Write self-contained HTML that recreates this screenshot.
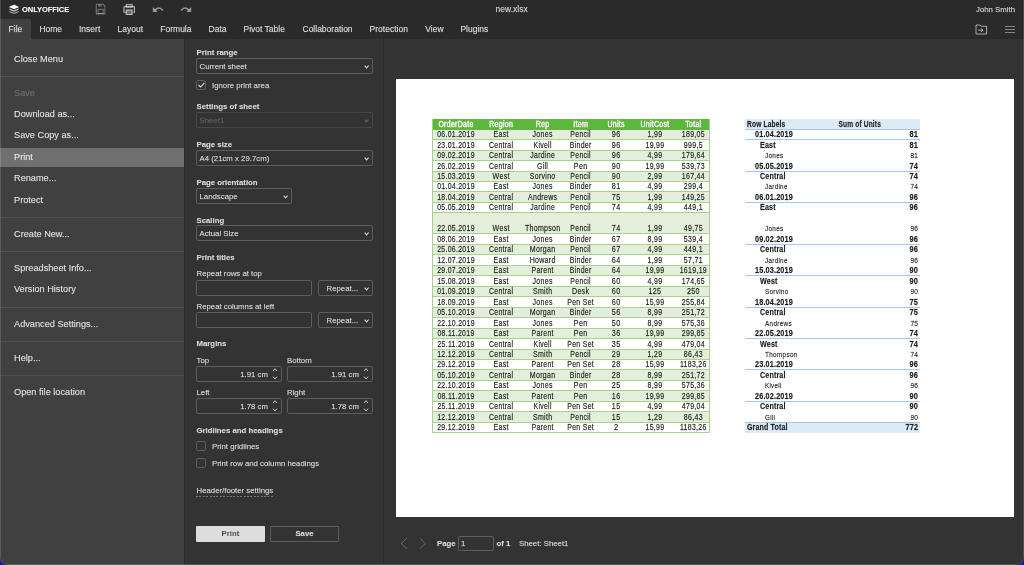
<!DOCTYPE html><html><head><meta charset="utf-8"><style>
*{margin:0;padding:0;box-sizing:border-box}
html,body{width:1024px;height:565px;overflow:hidden;background:#2c10a8}
body{font-family:"Liberation Sans",sans-serif;position:relative}
.abs{position:absolute}
.t{position:absolute;white-space:nowrap;line-height:1;-webkit-text-stroke:0.25px rgba(255,255,255,.3)}
#win{position:absolute;left:0;top:0;width:1024px;height:565px;background:#333;border-radius:0 0 7px 7px;overflow:hidden;filter:blur(0.3px)}
#frame{position:absolute;left:0;top:-10px;width:1024px;height:575px;border:1px solid rgba(255,255,255,.15);border-radius:0 0 7px 7px;pointer-events:none}
#hdr{position:absolute;left:0;top:0;width:1024px;height:39px;background:#2a2a2a}
#left{position:absolute;left:0;top:39px;width:184px;height:526px;background:#404040}
#mid{position:absolute;left:185px;top:39px;width:198px;height:526px;background:#333}
#prev{position:absolute;left:384px;top:39px;width:640px;height:526px;background:#333}
.div1{position:absolute;background:#2b2b2b}
.tab{position:absolute;top:19px;height:20px;font-size:8.5px;color:rgba(255,255,255,.8)}
.mi{position:absolute;left:14px;font-size:9.2px;color:rgba(255,255,255,.8)}
.sep{position:absolute;left:0;width:184px;height:1px;background:#4e4e4e}
.lbl{position:absolute;font-size:7.8px;font-weight:bold;color:rgba(255,255,255,.8)}
.txt{position:absolute;font-size:7.8px;color:rgba(255,255,255,.8)}
.box{position:absolute;border:1px solid #5d5d5d;border-radius:2px;height:16px}
.caret{position:absolute;width:4px;height:4px;border-right:1px solid rgba(255,255,255,.8);border-bottom:1px solid rgba(255,255,255,.8);transform:rotate(45deg)}
.cb{position:absolute;width:10px;height:10px;border:1px solid #5d5d5d;border-radius:2px}
#page{position:absolute;left:396px;top:79px;width:618px;height:438px;background:#fff}
.c{position:absolute;white-space:nowrap;line-height:1;font-size:7.6px;color:#222}
.k{-webkit-text-stroke:0.3px rgba(0,0,0,.45)}
</style></head><body><div id="win">
<div id="hdr"></div>
<div id="left"></div><div class="div1" style="left:184px;top:39px;width:1px;height:526px"></div>
<div id="mid"></div><div class="div1" style="left:383px;top:39px;width:1px;height:526px"></div>
<div id="prev"></div>
<svg class="abs" style="left:8px;top:4px" width="12" height="11" viewBox="0 0 12 11">
<path d="M6 0.5 L11.2 2.9 L6 5.3 L0.8 2.9Z" fill="#fff"/>
<path d="M1.4 5 L6 7.1 L10.6 5" fill="none" stroke="rgba(255,255,255,.75)" stroke-width="1.1"/>
<path d="M1.4 7.4 L6 9.5 L10.6 7.4" fill="none" stroke="rgba(255,255,255,.6)" stroke-width="1.1"/>
</svg>
<div class="t" style="left:22px;top:6px;font-size:7.5px;font-weight:bold;color:#fff;letter-spacing:-0.05px">ONLYOFFICE</div>
<svg class="abs" style="left:95px;top:3px" width="11" height="12" viewBox="0 0 11 12">
<path d="M1.3 1.3 H8 L9.9 3.2 V10.9 H1.3Z" fill="none" stroke="rgba(255,255,255,.33)" stroke-width="1.1"/>
<rect x="3" y="1.5" width="3.6" height="2" fill="rgba(255,255,255,.33)"/>
<rect x="3" y="6.3" width="5.2" height="4.2" fill="none" stroke="rgba(255,255,255,.33)" stroke-width="1"/>
</svg>
<svg class="abs" style="left:123px;top:3px" width="13" height="12" viewBox="0 0 13 12">
<rect x="3.3" y="1.6" width="5.8" height="2.4" fill="none" stroke="rgba(255,255,255,.65)" stroke-width="1.1"/>
<path d="M3 9.3 H0.95 V4.4 Q0.95 3.6 1.8 3.6 H10.6 Q11.45 3.6 11.45 4.4 V9.3 H10.2" fill="none" stroke="rgba(255,255,255,.65)" stroke-width="1.1"/>
<rect x="3.3" y="7" width="5.8" height="4.4" fill="rgba(255,255,255,.3)" stroke="rgba(255,255,255,.65)" stroke-width="1.1"/>
</svg>
<svg class="abs" style="left:152px;top:6px" width="12" height="7" viewBox="0 0 12 7">
<path d="M3 4.2 Q7 -0.2 11 4.4" fill="none" stroke="rgba(255,255,255,.5)" stroke-width="1.5"/>
<path d="M0.8 0.9 V6 H5.8Z" fill="rgba(255,255,255,.5)"/>
</svg>
<svg class="abs" style="left:180px;top:6px" width="12" height="7" viewBox="0 0 12 7">
<path d="M9 4.2 Q5 -0.2 1 4.4" fill="none" stroke="rgba(255,255,255,.5)" stroke-width="1.5"/>
<path d="M11.2 0.9 V6 H6.2Z" fill="rgba(255,255,255,.5)"/>
</svg>
<div class="t" style="left:495.6px;top:5px;font-size:8.5px;color:rgba(255,255,255,.8)">new.xlsx</div>
<div class="t" style="left:976px;top:6px;font-size:7.8px;color:rgba(255,255,255,.8)">John Smith</div>
<svg class="abs" style="left:975px;top:24px" width="13" height="11" viewBox="0 0 13 11">
<path d="M1 1 H5 L6.2 2.2 H11.6 V10 H1Z" fill="none" stroke="rgba(255,255,255,.65)" stroke-width="0.9"/>
<path d="M3.2 6.2 H7.8" stroke="rgba(255,255,255,.7)" stroke-width="0.9"/>
<path d="M6.2 4.6 L7.9 6.2 L6.2 7.8" fill="none" stroke="rgba(255,255,255,.7)" stroke-width="0.9"/>
</svg>
<svg class="abs" style="left:1005px;top:25px" width="10" height="9" viewBox="0 0 10 9">
<path d="M0 1.5H10M0 4.5H10M0 7.5H10" stroke="rgba(255,255,255,.55)" stroke-width="0.8"/>
</svg>
<div class="abs" style="left:0;top:19px;width:31px;height:20px;background:#404040"></div>
<div class="t" style="left:8.6px;top:25px;font-size:8.5px;color:rgba(255,255,255,.85)">File</div>
<div class="t" style="left:39.4px;top:25px;font-size:8.5px;color:rgba(255,255,255,.85)">Home</div>
<div class="t" style="left:79px;top:25px;font-size:8.5px;color:rgba(255,255,255,.85)">Insert</div>
<div class="t" style="left:117.6px;top:25px;font-size:8.5px;color:rgba(255,255,255,.85)">Layout</div>
<div class="t" style="left:160.3px;top:25px;font-size:8.5px;color:rgba(255,255,255,.85)">Formula</div>
<div class="t" style="left:208.6px;top:25px;font-size:8.5px;color:rgba(255,255,255,.85)">Data</div>
<div class="t" style="left:243.5px;top:25px;font-size:8.5px;color:rgba(255,255,255,.85)">Pivot Table</div>
<div class="t" style="left:302.5px;top:25px;font-size:8.5px;color:rgba(255,255,255,.85)">Collaboration</div>
<div class="t" style="left:369.6px;top:25px;font-size:8.5px;color:rgba(255,255,255,.85)">Protection</div>
<div class="t" style="left:425.3px;top:25px;font-size:8.5px;color:rgba(255,255,255,.85)">View</div>
<div class="t" style="left:460.4px;top:25px;font-size:8.5px;color:rgba(255,255,255,.85)">Plugins</div>
<div class="abs" style="left:0;top:148px;width:184px;height:19px;background:#707070"></div>
<div class="t" style="left:14px;top:55px;font-size:9.2px;color:rgba(255,255,255,.85)">Close Menu</div>
<div class="t" style="left:14px;top:89px;font-size:9.2px;color:rgba(255,255,255,.2);-webkit-text-stroke:0.25px rgba(255,255,255,.1)">Save</div>
<div class="t" style="left:14px;top:110px;font-size:9.2px;color:rgba(255,255,255,.85)">Download as...</div>
<div class="t" style="left:14px;top:131px;font-size:9.2px;color:rgba(255,255,255,.85)">Save Copy as...</div>
<div class="t" style="left:14px;top:153px;font-size:9.2px;color:rgba(255,255,255,.85)">Print</div>
<div class="t" style="left:14px;top:174px;font-size:9.2px;color:rgba(255,255,255,.85)">Rename...</div>
<div class="t" style="left:14px;top:196px;font-size:9.2px;color:rgba(255,255,255,.85)">Protect</div>
<div class="t" style="left:14px;top:230px;font-size:9.2px;color:rgba(255,255,255,.85)">Create New...</div>
<div class="t" style="left:14px;top:264px;font-size:9.2px;color:rgba(255,255,255,.85)">Spreadsheet Info...</div>
<div class="t" style="left:14px;top:285px;font-size:9.2px;color:rgba(255,255,255,.85)">Version History</div>
<div class="t" style="left:14px;top:320px;font-size:9.2px;color:rgba(255,255,255,.85)">Advanced Settings...</div>
<div class="t" style="left:14px;top:354px;font-size:9.2px;color:rgba(255,255,255,.85)">Help...</div>
<div class="t" style="left:14px;top:388px;font-size:9.2px;color:rgba(255,255,255,.85)">Open file location</div>
<div class="sep" style="top:76px"></div>
<div class="sep" style="top:217px"></div>
<div class="sep" style="top:251px"></div>
<div class="sep" style="top:307px"></div>
<div class="sep" style="top:341px"></div>
<div class="sep" style="top:375px"></div>
<div class="t" style="left:196.5px;top:49.4px;font-size:7.8px;font-weight:bold;color:rgba(255,255,255,.8)">Print range</div>
<div class="abs" style="left:196px;top:58px;width:177px;height:16px;border:1px solid #5d5d5d;border-radius:2px"></div>
<div class="t" style="left:199.5px;top:62.5px;font-size:7.8px;color:rgba(255,255,255,.8)">Current sheet</div>
<svg class="abs" style="left:364px;top:65px" width="6" height="4" viewBox="0 0 6 4"><path d="M0.7 0.7 L2.6 2.9 L4.6 0.7" fill="none" stroke="rgba(255,255,255,.8)" stroke-width="1.1"/></svg>
<div class="abs" style="left:196px;top:80px;width:10px;height:10px;border:1px solid #5d5d5d;border-radius:2px"></div>
<svg class="abs" style="left:198px;top:82px" width="7" height="6" viewBox="0 0 7 6"><path d="M0.6 3 L2.6 5 L6.4 0.8" fill="none" stroke="rgba(255,255,255,.85)" stroke-width="1.1"/></svg>
<div class="t" style="left:212px;top:82.3px;font-size:7.8px;color:rgba(255,255,255,.8)">Ignore print area</div>
<div class="t" style="left:196.5px;top:103.2px;font-size:7.8px;font-weight:bold;color:rgba(255,255,255,.8)">Settings of sheet</div>
<div class="abs" style="left:196px;top:112px;width:177px;height:16px;border:1px solid #464646;border-radius:2px"></div>
<div class="t" style="left:199.5px;top:116.5px;font-size:7.8px;color:rgba(255,255,255,.2);-webkit-text-stroke:0.2px rgba(255,255,255,.1)">Sheet1</div>
<svg class="abs" style="left:364px;top:119px" width="6" height="4" viewBox="0 0 6 4"><path d="M0.7 0.7 L2.6 2.9 L4.6 0.7" fill="none" stroke="rgba(255,255,255,.25)" stroke-width="1.1"/></svg>
<div class="t" style="left:196.5px;top:141px;font-size:7.8px;font-weight:bold;color:rgba(255,255,255,.8)">Page size</div>
<div class="abs" style="left:196px;top:150px;width:177px;height:16px;border:1px solid #5d5d5d;border-radius:2px"></div>
<div class="t" style="left:199.5px;top:154.5px;font-size:7.8px;color:rgba(255,255,255,.8)">A4 (21cm x 29.7cm)</div>
<svg class="abs" style="left:364px;top:157px" width="6" height="4" viewBox="0 0 6 4"><path d="M0.7 0.7 L2.6 2.9 L4.6 0.7" fill="none" stroke="rgba(255,255,255,.8)" stroke-width="1.1"/></svg>
<div class="t" style="left:196.5px;top:178.6px;font-size:7.8px;font-weight:bold;color:rgba(255,255,255,.8)">Page orientation</div>
<div class="abs" style="left:196px;top:188px;width:96px;height:16px;border:1px solid #5d5d5d;border-radius:2px"></div>
<div class="t" style="left:199.5px;top:192.5px;font-size:7.8px;color:rgba(255,255,255,.8)">Landscape</div>
<svg class="abs" style="left:283px;top:195px" width="6" height="4" viewBox="0 0 6 4"><path d="M0.7 0.7 L2.6 2.9 L4.6 0.7" fill="none" stroke="rgba(255,255,255,.8)" stroke-width="1.1"/></svg>
<div class="t" style="left:196.5px;top:216.6px;font-size:7.8px;font-weight:bold;color:rgba(255,255,255,.8)">Scaling</div>
<div class="abs" style="left:196px;top:225px;width:177px;height:16px;border:1px solid #5d5d5d;border-radius:2px"></div>
<div class="t" style="left:199.5px;top:229.5px;font-size:7.8px;color:rgba(255,255,255,.8)">Actual Size</div>
<svg class="abs" style="left:364px;top:232px" width="6" height="4" viewBox="0 0 6 4"><path d="M0.7 0.7 L2.6 2.9 L4.6 0.7" fill="none" stroke="rgba(255,255,255,.8)" stroke-width="1.1"/></svg>
<div class="t" style="left:196.5px;top:254.3px;font-size:7.8px;font-weight:bold;color:rgba(255,255,255,.8)">Print titles</div>
<div class="t" style="left:196.5px;top:270.2px;font-size:7.8px;color:rgba(255,255,255,.8)">Repeat rows at top</div>
<div class="abs" style="left:196px;top:280px;width:116px;height:16px;border:1px solid #5d5d5d;border-radius:2px"></div>
<div class="abs" style="left:318px;top:280px;width:55px;height:16px;border:1px solid #5d5d5d;border-radius:2px"></div>
<div class="t" style="left:326.5px;top:284.5px;font-size:7.8px;color:rgba(255,255,255,.8)">Repeat...</div>
<svg class="abs" style="left:364px;top:287px" width="6" height="4" viewBox="0 0 6 4"><path d="M0.7 0.7 L2.6 2.9 L4.6 0.7" fill="none" stroke="rgba(255,255,255,.8)" stroke-width="1.1"/></svg>
<div class="t" style="left:196.5px;top:302.5px;font-size:7.8px;color:rgba(255,255,255,.8)">Repeat columns at left</div>
<div class="abs" style="left:196px;top:312px;width:116px;height:16px;border:1px solid #5d5d5d;border-radius:2px"></div>
<div class="abs" style="left:318px;top:312px;width:55px;height:16px;border:1px solid #5d5d5d;border-radius:2px"></div>
<div class="t" style="left:326.5px;top:316.5px;font-size:7.8px;color:rgba(255,255,255,.8)">Repeat...</div>
<svg class="abs" style="left:364px;top:319px" width="6" height="4" viewBox="0 0 6 4"><path d="M0.7 0.7 L2.6 2.9 L4.6 0.7" fill="none" stroke="rgba(255,255,255,.8)" stroke-width="1.1"/></svg>
<div class="t" style="left:196.5px;top:340.3px;font-size:7.8px;font-weight:bold;color:rgba(255,255,255,.8)">Margins</div>
<div class="t" style="left:196.5px;top:356.5px;font-size:7.8px;color:rgba(255,255,255,.8)">Top</div>
<div class="t" style="left:287px;top:356.5px;font-size:7.8px;color:rgba(255,255,255,.8)">Bottom</div>
<div class="t" style="left:196.5px;top:389px;font-size:7.8px;color:rgba(255,255,255,.8)">Left</div>
<div class="t" style="left:287px;top:389px;font-size:7.8px;color:rgba(255,255,255,.8)">Right</div>
<div class="abs" style="left:196px;top:366px;width:86px;height:16px;border:1px solid #5d5d5d;border-radius:2px"></div>
<div class="t" style="left:196px;width:72px;text-align:right;top:370.5px;font-size:7.8px;color:rgba(255,255,255,.8)">1.91 cm</div>
<svg class="abs" style="left:271px;top:366px" width="8" height="16" viewBox="0 0 8 16"><path d="M2 5 L4 2.6 L6 5 M2 10.6 L4 13 L6 10.6" fill="none" stroke="rgba(255,255,255,.75)" stroke-width="0.9"/></svg>
<div class="abs" style="left:287px;top:366px;width:86px;height:16px;border:1px solid #5d5d5d;border-radius:2px"></div>
<div class="t" style="left:287px;width:72px;text-align:right;top:370.5px;font-size:7.8px;color:rgba(255,255,255,.8)">1.91 cm</div>
<svg class="abs" style="left:362px;top:366px" width="8" height="16" viewBox="0 0 8 16"><path d="M2 5 L4 2.6 L6 5 M2 10.6 L4 13 L6 10.6" fill="none" stroke="rgba(255,255,255,.75)" stroke-width="0.9"/></svg>
<div class="abs" style="left:196px;top:398px;width:86px;height:16px;border:1px solid #5d5d5d;border-radius:2px"></div>
<div class="t" style="left:196px;width:72px;text-align:right;top:402.5px;font-size:7.8px;color:rgba(255,255,255,.8)">1.78 cm</div>
<svg class="abs" style="left:271px;top:398px" width="8" height="16" viewBox="0 0 8 16"><path d="M2 5 L4 2.6 L6 5 M2 10.6 L4 13 L6 10.6" fill="none" stroke="rgba(255,255,255,.75)" stroke-width="0.9"/></svg>
<div class="abs" style="left:287px;top:398px;width:86px;height:16px;border:1px solid #5d5d5d;border-radius:2px"></div>
<div class="t" style="left:287px;width:72px;text-align:right;top:402.5px;font-size:7.8px;color:rgba(255,255,255,.8)">1.78 cm</div>
<svg class="abs" style="left:362px;top:398px" width="8" height="16" viewBox="0 0 8 16"><path d="M2 5 L4 2.6 L6 5 M2 10.6 L4 13 L6 10.6" fill="none" stroke="rgba(255,255,255,.75)" stroke-width="0.9"/></svg>
<div class="t" style="left:196.5px;top:426.5px;font-size:7.8px;font-weight:bold;color:rgba(255,255,255,.8)">Gridlines and headings</div>
<div class="abs" style="left:196px;top:441px;width:10px;height:10px;border:1px solid #5d5d5d;border-radius:2px"></div>
<div class="t" style="left:212px;top:442.7px;font-size:7.8px;color:rgba(255,255,255,.8)">Print gridlines</div>
<div class="abs" style="left:196px;top:458px;width:10px;height:10px;border:1px solid #5d5d5d;border-radius:2px"></div>
<div class="t" style="left:212px;top:459.5px;font-size:7.8px;color:rgba(255,255,255,.8)">Print row and column headings</div>
<div class="t" style="left:196.5px;top:487px;font-size:7.8px;color:rgba(255,255,255,.8)">Header/footer settings</div>
<div class="abs" style="left:196px;top:496px;width:77px;height:1px;background:repeating-linear-gradient(90deg,rgba(255,255,255,.32) 0 2px,transparent 2px 3.4px)"></div>
<div class="abs" style="left:196px;top:526px;width:69px;height:16px;background:#ddd;border-radius:1px"></div>
<div class="t" style="left:196px;width:69px;text-align:center;top:530px;font-size:7.8px;font-weight:bold;color:#333">Print</div>
<div class="abs" style="left:270px;top:526px;width:69px;height:16px;border:1px solid #5d5d5d;border-radius:1px"></div>
<div class="t" style="left:270px;width:69px;text-align:center;top:530px;font-size:7.8px;font-weight:bold;color:rgba(255,255,255,.8)">Save</div>
<svg class="abs" style="left:400px;top:537px" width="27" height="13" viewBox="0 0 27 13"><path d="M6.8 1.2 L1.1 6.5 L6.8 11.8 M20.2 1.2 L25.1 6.5 L20.2 11.8" fill="none" stroke="rgba(255,255,255,.3)" stroke-width="0.9"/></svg>
<div class="t" style="left:437px;top:540px;font-size:7.8px;font-weight:bold;color:rgba(255,255,255,.8)">Page</div>
<div class="abs" style="left:458px;top:536px;width:36px;height:15px;border:1px solid #5d5d5d;border-radius:2px"></div>
<div class="t" style="left:461px;top:540px;font-size:7.8px;color:rgba(255,255,255,.8)">1</div>
<div class="t" style="left:496.5px;top:540px;font-size:7.8px;font-weight:bold;color:rgba(255,255,255,.8)">of 1</div>
<div class="t" style="left:519px;top:540px;font-size:7.8px;color:rgba(255,255,255,.8)">Sheet: Sheet1</div>
<div id="page">
<div class="abs" style="left:36.30000000000001px;top:40.2px;width:277.7px;height:10.47px;background:#5cb83c"></div>
<div class="c k" style="left:36.30000000000001px;width:47.69999999999999px;text-align:center;top:42px;font-size:8.2px;font-weight:normal;color:#fff;-webkit-text-stroke:0.35px #fff;transform:scaleX(0.8489368339120886);transform-origin:50% 0"><span style="letter-spacing:0.353px;margin-right:-0.353px">OrderDate</span></div>
<div class="c k" style="left:84px;width:42px;text-align:center;top:42px;font-size:8.2px;font-weight:normal;color:#fff;-webkit-text-stroke:0.35px #fff;transform:scaleX(0.8539115048613974);transform-origin:50% 0"><span style="letter-spacing:0.351px;margin-right:-0.351px">Region</span></div>
<div class="c k" style="left:126px;width:41px;text-align:center;top:42px;font-size:8.2px;font-weight:normal;color:#fff;-webkit-text-stroke:0.35px #fff;transform:scaleX(0.8717717962994201);transform-origin:50% 0"><span style="letter-spacing:0.344px;margin-right:-0.344px">Rep</span></div>
<div class="c k" style="left:167px;width:35px;text-align:center;top:42px;font-size:8.2px;font-weight:normal;color:#fff;-webkit-text-stroke:0.35px #fff;transform:scaleX(0.8552034912933004);transform-origin:50% 0"><span style="letter-spacing:0.351px;margin-right:-0.351px">Item</span></div>
<div class="c k" style="left:202px;width:36px;text-align:center;top:42px;font-size:8.2px;font-weight:normal;color:#fff;-webkit-text-stroke:0.35px #fff;transform:scaleX(0.8473964813672589);transform-origin:50% 0"><span style="letter-spacing:0.354px;margin-right:-0.354px">Units</span></div>
<div class="c k" style="left:238px;width:41.60000000000002px;text-align:center;top:42px;font-size:8.2px;font-weight:normal;color:#fff;-webkit-text-stroke:0.35px #fff;transform:scaleX(0.8448373205062287);transform-origin:50% 0"><span style="letter-spacing:0.355px;margin-right:-0.355px">UnitCost</span></div>
<div class="c k" style="left:279.6px;width:34.39999999999998px;text-align:center;top:42px;font-size:8.2px;font-weight:normal;color:#fff;-webkit-text-stroke:0.35px #fff;transform:scaleX(0.8423419022354752);transform-origin:50% 0"><span style="letter-spacing:0.356px;margin-right:-0.356px">Total</span></div>
<div class="abs" style="left:36.30000000000001px;top:50.670000000000016px;width:277.7px;height:10.469999999999999px;background:#e2efda;border-bottom:1px solid #a9d08e"></div>
<div class="c k" style="left:36.30000000000001px;width:47.69999999999999px;text-align:center;top:52px;font-size:8.2px;font-weight:normal;color:#262626;transform:scaleX(0.8458370905680287);transform-origin:50% 0"><span style="letter-spacing:0.355px;margin-right:-0.355px">06.01.2019</span></div>
<div class="c k" style="left:84px;width:42px;text-align:center;top:52px;font-size:8.2px;font-weight:normal;color:#262626;transform:scaleX(0.8567889794970145);transform-origin:50% 0"><span style="letter-spacing:0.350px;margin-right:-0.350px">East</span></div>
<div class="c k" style="left:126px;width:41px;text-align:center;top:52px;font-size:8.2px;font-weight:normal;color:#262626;transform:scaleX(0.8567987955280109);transform-origin:50% 0"><span style="letter-spacing:0.350px;margin-right:-0.350px">Jones</span></div>
<div class="c k" style="left:167px;width:35px;text-align:center;top:52px;font-size:8.2px;font-weight:normal;color:#262626;transform:scaleX(0.8444620610158442);transform-origin:50% 0"><span style="letter-spacing:0.355px;margin-right:-0.355px">Pencil</span></div>
<div class="c k" style="left:202px;width:36px;text-align:center;top:52px;font-size:8.2px;font-weight:normal;color:#262626;transform:scaleX(0.8787753421838015);transform-origin:50% 0"><span style="letter-spacing:0.341px;margin-right:-0.341px">96</span></div>
<div class="c k" style="left:238px;width:41.60000000000002px;text-align:center;top:52px;font-size:8.2px;font-weight:normal;color:#262626;transform:scaleX(0.8552455855800718);transform-origin:50% 0"><span style="letter-spacing:0.351px;margin-right:-0.351px">1,99</span></div>
<div class="c k" style="left:279.6px;width:34.39999999999998px;text-align:center;top:52px;font-size:8.2px;font-weight:normal;color:#262626;transform:scaleX(0.8518263305339175);transform-origin:50% 0"><span style="letter-spacing:0.352px;margin-right:-0.352px">189,05</span></div>
<div class="abs" style="left:36.30000000000001px;top:61.140000000000015px;width:277.7px;height:10.469999999999999px;background:#fff;border-bottom:1px solid #a9d08e"></div>
<div class="c k" style="left:36.30000000000001px;width:47.69999999999999px;text-align:center;top:63px;font-size:8.2px;font-weight:normal;color:#262626;transform:scaleX(0.8458370905680287);transform-origin:50% 0"><span style="letter-spacing:0.355px;margin-right:-0.355px">23.01.2019</span></div>
<div class="c k" style="left:84px;width:42px;text-align:center;top:63px;font-size:8.2px;font-weight:normal;color:#262626;transform:scaleX(0.8435291305419137);transform-origin:50% 0"><span style="letter-spacing:0.356px;margin-right:-0.356px">Central</span></div>
<div class="c k" style="left:126px;width:41px;text-align:center;top:63px;font-size:8.2px;font-weight:normal;color:#262626;transform:scaleX(0.8350636701129697);transform-origin:50% 0"><span style="letter-spacing:0.359px;margin-right:-0.359px">Kivell</span></div>
<div class="c k" style="left:167px;width:35px;text-align:center;top:63px;font-size:8.2px;font-weight:normal;color:#262626;transform:scaleX(0.8483468355335111);transform-origin:50% 0"><span style="letter-spacing:0.354px;margin-right:-0.354px">Binder</span></div>
<div class="c k" style="left:202px;width:36px;text-align:center;top:63px;font-size:8.2px;font-weight:normal;color:#262626;transform:scaleX(0.8787753421838015);transform-origin:50% 0"><span style="letter-spacing:0.341px;margin-right:-0.341px">96</span></div>
<div class="c k" style="left:238px;width:41.60000000000002px;text-align:center;top:63px;font-size:8.2px;font-weight:normal;color:#262626;transform:scaleX(0.8531560046241556);transform-origin:50% 0"><span style="letter-spacing:0.352px;margin-right:-0.352px">19,99</span></div>
<div class="c k" style="left:279.6px;width:34.39999999999998px;text-align:center;top:63px;font-size:8.2px;font-weight:normal;color:#262626;transform:scaleX(0.8531560046241556);transform-origin:50% 0"><span style="letter-spacing:0.352px;margin-right:-0.352px">999,5</span></div>
<div class="abs" style="left:36.30000000000001px;top:71.61000000000001px;width:277.7px;height:10.469999999999999px;background:#e2efda;border-bottom:1px solid #a9d08e"></div>
<div class="c k" style="left:36.30000000000001px;width:47.69999999999999px;text-align:center;top:73px;font-size:8.2px;font-weight:normal;color:#262626;transform:scaleX(0.8458370905680287);transform-origin:50% 0"><span style="letter-spacing:0.355px;margin-right:-0.355px">09.02.2019</span></div>
<div class="c k" style="left:84px;width:42px;text-align:center;top:73px;font-size:8.2px;font-weight:normal;color:#262626;transform:scaleX(0.8435291305419137);transform-origin:50% 0"><span style="letter-spacing:0.356px;margin-right:-0.356px">Central</span></div>
<div class="c k" style="left:126px;width:41px;text-align:center;top:73px;font-size:8.2px;font-weight:normal;color:#262626;transform:scaleX(0.8446962881746647);transform-origin:50% 0"><span style="letter-spacing:0.355px;margin-right:-0.355px">Jardine</span></div>
<div class="c k" style="left:167px;width:35px;text-align:center;top:73px;font-size:8.2px;font-weight:normal;color:#262626;transform:scaleX(0.8444620610158442);transform-origin:50% 0"><span style="letter-spacing:0.355px;margin-right:-0.355px">Pencil</span></div>
<div class="c k" style="left:202px;width:36px;text-align:center;top:73px;font-size:8.2px;font-weight:normal;color:#262626;transform:scaleX(0.8787753421838015);transform-origin:50% 0"><span style="letter-spacing:0.341px;margin-right:-0.341px">96</span></div>
<div class="c k" style="left:238px;width:41.60000000000002px;text-align:center;top:73px;font-size:8.2px;font-weight:normal;color:#262626;transform:scaleX(0.8552455855800718);transform-origin:50% 0"><span style="letter-spacing:0.351px;margin-right:-0.351px">4,99</span></div>
<div class="c k" style="left:279.6px;width:34.39999999999998px;text-align:center;top:73px;font-size:8.2px;font-weight:normal;color:#262626;transform:scaleX(0.8518263305339175);transform-origin:50% 0"><span style="letter-spacing:0.352px;margin-right:-0.352px">179,64</span></div>
<div class="abs" style="left:36.30000000000001px;top:82.08000000000001px;width:277.7px;height:10.469999999999999px;background:#fff;border-bottom:1px solid #a9d08e"></div>
<div class="c k" style="left:36.30000000000001px;width:47.69999999999999px;text-align:center;top:84px;font-size:8.2px;font-weight:normal;color:#262626;transform:scaleX(0.8458370905680287);transform-origin:50% 0"><span style="letter-spacing:0.355px;margin-right:-0.355px">26.02.2019</span></div>
<div class="c k" style="left:84px;width:42px;text-align:center;top:84px;font-size:8.2px;font-weight:normal;color:#262626;transform:scaleX(0.8435291305419137);transform-origin:50% 0"><span style="letter-spacing:0.356px;margin-right:-0.356px">Central</span></div>
<div class="c k" style="left:126px;width:41px;text-align:center;top:84px;font-size:8.2px;font-weight:normal;color:#262626;transform:scaleX(0.8356235192235947);transform-origin:50% 0"><span style="letter-spacing:0.359px;margin-right:-0.359px">Gill</span></div>
<div class="c k" style="left:167px;width:35px;text-align:center;top:84px;font-size:8.2px;font-weight:normal;color:#262626;transform:scaleX(0.8705334324672714);transform-origin:50% 0"><span style="letter-spacing:0.345px;margin-right:-0.345px">Pen</span></div>
<div class="c k" style="left:202px;width:36px;text-align:center;top:84px;font-size:8.2px;font-weight:normal;color:#262626;transform:scaleX(0.8787753421838015);transform-origin:50% 0"><span style="letter-spacing:0.341px;margin-right:-0.341px">90</span></div>
<div class="c k" style="left:238px;width:41.60000000000002px;text-align:center;top:84px;font-size:8.2px;font-weight:normal;color:#262626;transform:scaleX(0.8531560046241556);transform-origin:50% 0"><span style="letter-spacing:0.352px;margin-right:-0.352px">19,99</span></div>
<div class="c k" style="left:279.6px;width:34.39999999999998px;text-align:center;top:84px;font-size:8.2px;font-weight:normal;color:#262626;transform:scaleX(0.8518263305339175);transform-origin:50% 0"><span style="letter-spacing:0.352px;margin-right:-0.352px">539,73</span></div>
<div class="abs" style="left:36.30000000000001px;top:92.55000000000001px;width:277.7px;height:10.469999999999999px;background:#e2efda;border-bottom:1px solid #a9d08e"></div>
<div class="c k" style="left:36.30000000000001px;width:47.69999999999999px;text-align:center;top:94px;font-size:8.2px;font-weight:normal;color:#262626;transform:scaleX(0.8458370905680287);transform-origin:50% 0"><span style="letter-spacing:0.355px;margin-right:-0.355px">15.03.2019</span></div>
<div class="c k" style="left:84px;width:42px;text-align:center;top:94px;font-size:8.2px;font-weight:normal;color:#262626;transform:scaleX(0.8630783828573125);transform-origin:50% 0"><span style="letter-spacing:0.348px;margin-right:-0.348px">West</span></div>
<div class="c k" style="left:126px;width:41px;text-align:center;top:94px;font-size:8.2px;font-weight:normal;color:#262626;transform:scaleX(0.8468869796923175);transform-origin:50% 0"><span style="letter-spacing:0.354px;margin-right:-0.354px">Sorvino</span></div>
<div class="c k" style="left:167px;width:35px;text-align:center;top:94px;font-size:8.2px;font-weight:normal;color:#262626;transform:scaleX(0.8444620610158442);transform-origin:50% 0"><span style="letter-spacing:0.355px;margin-right:-0.355px">Pencil</span></div>
<div class="c k" style="left:202px;width:36px;text-align:center;top:94px;font-size:8.2px;font-weight:normal;color:#262626;transform:scaleX(0.8787753421838015);transform-origin:50% 0"><span style="letter-spacing:0.341px;margin-right:-0.341px">90</span></div>
<div class="c k" style="left:238px;width:41.60000000000002px;text-align:center;top:94px;font-size:8.2px;font-weight:normal;color:#262626;transform:scaleX(0.8552455855800718);transform-origin:50% 0"><span style="letter-spacing:0.351px;margin-right:-0.351px">2,99</span></div>
<div class="c k" style="left:279.6px;width:34.39999999999998px;text-align:center;top:94px;font-size:8.2px;font-weight:normal;color:#262626;transform:scaleX(0.8518263305339175);transform-origin:50% 0"><span style="letter-spacing:0.352px;margin-right:-0.352px">167,44</span></div>
<div class="abs" style="left:36.30000000000001px;top:103.02000000000001px;width:277.7px;height:10.469999999999999px;background:#fff;border-bottom:1px solid #a9d08e"></div>
<div class="c k" style="left:36.30000000000001px;width:47.69999999999999px;text-align:center;top:104px;font-size:8.2px;font-weight:normal;color:#262626;transform:scaleX(0.8458370905680287);transform-origin:50% 0"><span style="letter-spacing:0.355px;margin-right:-0.355px">01.04.2019</span></div>
<div class="c k" style="left:84px;width:42px;text-align:center;top:104px;font-size:8.2px;font-weight:normal;color:#262626;transform:scaleX(0.8567889794970145);transform-origin:50% 0"><span style="letter-spacing:0.350px;margin-right:-0.350px">East</span></div>
<div class="c k" style="left:126px;width:41px;text-align:center;top:104px;font-size:8.2px;font-weight:normal;color:#262626;transform:scaleX(0.8567987955280109);transform-origin:50% 0"><span style="letter-spacing:0.350px;margin-right:-0.350px">Jones</span></div>
<div class="c k" style="left:167px;width:35px;text-align:center;top:104px;font-size:8.2px;font-weight:normal;color:#262626;transform:scaleX(0.8483468355335111);transform-origin:50% 0"><span style="letter-spacing:0.354px;margin-right:-0.354px">Binder</span></div>
<div class="c k" style="left:202px;width:36px;text-align:center;top:104px;font-size:8.2px;font-weight:normal;color:#262626;transform:scaleX(0.8787753421838015);transform-origin:50% 0"><span style="letter-spacing:0.341px;margin-right:-0.341px">81</span></div>
<div class="c k" style="left:238px;width:41.60000000000002px;text-align:center;top:104px;font-size:8.2px;font-weight:normal;color:#262626;transform:scaleX(0.8552455855800718);transform-origin:50% 0"><span style="letter-spacing:0.351px;margin-right:-0.351px">4,99</span></div>
<div class="c k" style="left:279.6px;width:34.39999999999998px;text-align:center;top:104px;font-size:8.2px;font-weight:normal;color:#262626;transform:scaleX(0.8531560046241556);transform-origin:50% 0"><span style="letter-spacing:0.352px;margin-right:-0.352px">299,4</span></div>
<div class="abs" style="left:36.30000000000001px;top:113.49000000000001px;width:277.7px;height:10.469999999999999px;background:#e2efda;border-bottom:1px solid #a9d08e"></div>
<div class="c k" style="left:36.30000000000001px;width:47.69999999999999px;text-align:center;top:115px;font-size:8.2px;font-weight:normal;color:#262626;transform:scaleX(0.8458370905680287);transform-origin:50% 0"><span style="letter-spacing:0.355px;margin-right:-0.355px">18.04.2019</span></div>
<div class="c k" style="left:84px;width:42px;text-align:center;top:115px;font-size:8.2px;font-weight:normal;color:#262626;transform:scaleX(0.8435291305419137);transform-origin:50% 0"><span style="letter-spacing:0.356px;margin-right:-0.356px">Central</span></div>
<div class="c k" style="left:126px;width:41px;text-align:center;top:115px;font-size:8.2px;font-weight:normal;color:#262626;transform:scaleX(0.8552173450239383);transform-origin:50% 0"><span style="letter-spacing:0.351px;margin-right:-0.351px">Andrews</span></div>
<div class="c k" style="left:167px;width:35px;text-align:center;top:115px;font-size:8.2px;font-weight:normal;color:#262626;transform:scaleX(0.8444620610158442);transform-origin:50% 0"><span style="letter-spacing:0.355px;margin-right:-0.355px">Pencil</span></div>
<div class="c k" style="left:202px;width:36px;text-align:center;top:115px;font-size:8.2px;font-weight:normal;color:#262626;transform:scaleX(0.8787753421838015);transform-origin:50% 0"><span style="letter-spacing:0.341px;margin-right:-0.341px">75</span></div>
<div class="c k" style="left:238px;width:41.60000000000002px;text-align:center;top:115px;font-size:8.2px;font-weight:normal;color:#262626;transform:scaleX(0.8552455855800718);transform-origin:50% 0"><span style="letter-spacing:0.351px;margin-right:-0.351px">1,99</span></div>
<div class="c k" style="left:279.6px;width:34.39999999999998px;text-align:center;top:115px;font-size:8.2px;font-weight:normal;color:#262626;transform:scaleX(0.8518263305339175);transform-origin:50% 0"><span style="letter-spacing:0.352px;margin-right:-0.352px">149,25</span></div>
<div class="abs" style="left:36.30000000000001px;top:123.96000000000001px;width:277.7px;height:10.469999999999999px;background:#fff;border-bottom:1px solid #a9d08e"></div>
<div class="c k" style="left:36.30000000000001px;width:47.69999999999999px;text-align:center;top:125px;font-size:8.2px;font-weight:normal;color:#262626;transform:scaleX(0.8458370905680287);transform-origin:50% 0"><span style="letter-spacing:0.355px;margin-right:-0.355px">05.05.2019</span></div>
<div class="c k" style="left:84px;width:42px;text-align:center;top:125px;font-size:8.2px;font-weight:normal;color:#262626;transform:scaleX(0.8435291305419137);transform-origin:50% 0"><span style="letter-spacing:0.356px;margin-right:-0.356px">Central</span></div>
<div class="c k" style="left:126px;width:41px;text-align:center;top:125px;font-size:8.2px;font-weight:normal;color:#262626;transform:scaleX(0.8446962881746647);transform-origin:50% 0"><span style="letter-spacing:0.355px;margin-right:-0.355px">Jardine</span></div>
<div class="c k" style="left:167px;width:35px;text-align:center;top:125px;font-size:8.2px;font-weight:normal;color:#262626;transform:scaleX(0.8444620610158442);transform-origin:50% 0"><span style="letter-spacing:0.355px;margin-right:-0.355px">Pencil</span></div>
<div class="c k" style="left:202px;width:36px;text-align:center;top:125px;font-size:8.2px;font-weight:normal;color:#262626;transform:scaleX(0.8787753421838015);transform-origin:50% 0"><span style="letter-spacing:0.341px;margin-right:-0.341px">74</span></div>
<div class="c k" style="left:238px;width:41.60000000000002px;text-align:center;top:125px;font-size:8.2px;font-weight:normal;color:#262626;transform:scaleX(0.8552455855800718);transform-origin:50% 0"><span style="letter-spacing:0.351px;margin-right:-0.351px">4,99</span></div>
<div class="c k" style="left:279.6px;width:34.39999999999998px;text-align:center;top:125px;font-size:8.2px;font-weight:normal;color:#262626;transform:scaleX(0.8531560046241556);transform-origin:50% 0"><span style="letter-spacing:0.352px;margin-right:-0.352px">449,1</span></div>
<div class="abs" style="left:36.30000000000001px;top:134.43px;width:277.7px;height:20.939999999999998px;background:#e2efda;border-bottom:1px solid #a9d08e"></div>
<div class="c k" style="left:36.30000000000001px;width:47.69999999999999px;text-align:center;top:146px;font-size:8.2px;font-weight:normal;color:#262626;transform:scaleX(0.8458370905680287);transform-origin:50% 0"><span style="letter-spacing:0.355px;margin-right:-0.355px">22.05.2019</span></div>
<div class="c k" style="left:84px;width:42px;text-align:center;top:146px;font-size:8.2px;font-weight:normal;color:#262626;transform:scaleX(0.8630783828573125);transform-origin:50% 0"><span style="letter-spacing:0.348px;margin-right:-0.348px">West</span></div>
<div class="c k" style="left:126px;width:41px;text-align:center;top:146px;font-size:8.2px;font-weight:normal;color:#262626;transform:scaleX(0.8574358628889386);transform-origin:50% 0"><span style="letter-spacing:0.350px;margin-right:-0.350px">Thompson</span></div>
<div class="c k" style="left:167px;width:35px;text-align:center;top:146px;font-size:8.2px;font-weight:normal;color:#262626;transform:scaleX(0.8444620610158442);transform-origin:50% 0"><span style="letter-spacing:0.355px;margin-right:-0.355px">Pencil</span></div>
<div class="c k" style="left:202px;width:36px;text-align:center;top:146px;font-size:8.2px;font-weight:normal;color:#262626;transform:scaleX(0.8787753421838015);transform-origin:50% 0"><span style="letter-spacing:0.341px;margin-right:-0.341px">74</span></div>
<div class="c k" style="left:238px;width:41.60000000000002px;text-align:center;top:146px;font-size:8.2px;font-weight:normal;color:#262626;transform:scaleX(0.8552455855800718);transform-origin:50% 0"><span style="letter-spacing:0.351px;margin-right:-0.351px">1,99</span></div>
<div class="c k" style="left:279.6px;width:34.39999999999998px;text-align:center;top:146px;font-size:8.2px;font-weight:normal;color:#262626;transform:scaleX(0.8531560046241556);transform-origin:50% 0"><span style="letter-spacing:0.352px;margin-right:-0.352px">49,75</span></div>
<div class="abs" style="left:36.30000000000001px;top:155.37px;width:277.7px;height:10.469999999999999px;background:#fff;border-bottom:1px solid #a9d08e"></div>
<div class="c k" style="left:36.30000000000001px;width:47.69999999999999px;text-align:center;top:157px;font-size:8.2px;font-weight:normal;color:#262626;transform:scaleX(0.8458370905680287);transform-origin:50% 0"><span style="letter-spacing:0.355px;margin-right:-0.355px">08.06.2019</span></div>
<div class="c k" style="left:84px;width:42px;text-align:center;top:157px;font-size:8.2px;font-weight:normal;color:#262626;transform:scaleX(0.8567889794970145);transform-origin:50% 0"><span style="letter-spacing:0.350px;margin-right:-0.350px">East</span></div>
<div class="c k" style="left:126px;width:41px;text-align:center;top:157px;font-size:8.2px;font-weight:normal;color:#262626;transform:scaleX(0.8567987955280109);transform-origin:50% 0"><span style="letter-spacing:0.350px;margin-right:-0.350px">Jones</span></div>
<div class="c k" style="left:167px;width:35px;text-align:center;top:157px;font-size:8.2px;font-weight:normal;color:#262626;transform:scaleX(0.8483468355335111);transform-origin:50% 0"><span style="letter-spacing:0.354px;margin-right:-0.354px">Binder</span></div>
<div class="c k" style="left:202px;width:36px;text-align:center;top:157px;font-size:8.2px;font-weight:normal;color:#262626;transform:scaleX(0.8787753421838015);transform-origin:50% 0"><span style="letter-spacing:0.341px;margin-right:-0.341px">67</span></div>
<div class="c k" style="left:238px;width:41.60000000000002px;text-align:center;top:157px;font-size:8.2px;font-weight:normal;color:#262626;transform:scaleX(0.8552455855800718);transform-origin:50% 0"><span style="letter-spacing:0.351px;margin-right:-0.351px">8,99</span></div>
<div class="c k" style="left:279.6px;width:34.39999999999998px;text-align:center;top:157px;font-size:8.2px;font-weight:normal;color:#262626;transform:scaleX(0.8531560046241556);transform-origin:50% 0"><span style="letter-spacing:0.352px;margin-right:-0.352px">539,4</span></div>
<div class="abs" style="left:36.30000000000001px;top:165.84px;width:277.7px;height:10.469999999999999px;background:#e2efda;border-bottom:1px solid #a9d08e"></div>
<div class="c k" style="left:36.30000000000001px;width:47.69999999999999px;text-align:center;top:167px;font-size:8.2px;font-weight:normal;color:#262626;transform:scaleX(0.8458370905680287);transform-origin:50% 0"><span style="letter-spacing:0.355px;margin-right:-0.355px">25.06.2019</span></div>
<div class="c k" style="left:84px;width:42px;text-align:center;top:167px;font-size:8.2px;font-weight:normal;color:#262626;transform:scaleX(0.8435291305419137);transform-origin:50% 0"><span style="letter-spacing:0.356px;margin-right:-0.356px">Central</span></div>
<div class="c k" style="left:126px;width:41px;text-align:center;top:167px;font-size:8.2px;font-weight:normal;color:#262626;transform:scaleX(0.857690369255793);transform-origin:50% 0"><span style="letter-spacing:0.350px;margin-right:-0.350px">Morgan</span></div>
<div class="c k" style="left:167px;width:35px;text-align:center;top:167px;font-size:8.2px;font-weight:normal;color:#262626;transform:scaleX(0.8444620610158442);transform-origin:50% 0"><span style="letter-spacing:0.355px;margin-right:-0.355px">Pencil</span></div>
<div class="c k" style="left:202px;width:36px;text-align:center;top:167px;font-size:8.2px;font-weight:normal;color:#262626;transform:scaleX(0.8787753421838015);transform-origin:50% 0"><span style="letter-spacing:0.341px;margin-right:-0.341px">67</span></div>
<div class="c k" style="left:238px;width:41.60000000000002px;text-align:center;top:167px;font-size:8.2px;font-weight:normal;color:#262626;transform:scaleX(0.8552455855800718);transform-origin:50% 0"><span style="letter-spacing:0.351px;margin-right:-0.351px">4,99</span></div>
<div class="c k" style="left:279.6px;width:34.39999999999998px;text-align:center;top:167px;font-size:8.2px;font-weight:normal;color:#262626;transform:scaleX(0.8531560046241556);transform-origin:50% 0"><span style="letter-spacing:0.352px;margin-right:-0.352px">449,1</span></div>
<div class="abs" style="left:36.30000000000001px;top:176.31px;width:277.7px;height:10.470000000000027px;background:#fff;border-bottom:1px solid #a9d08e"></div>
<div class="c k" style="left:36.30000000000001px;width:47.69999999999999px;text-align:center;top:178px;font-size:8.2px;font-weight:normal;color:#262626;transform:scaleX(0.8458370905680287);transform-origin:50% 0"><span style="letter-spacing:0.355px;margin-right:-0.355px">12.07.2019</span></div>
<div class="c k" style="left:84px;width:42px;text-align:center;top:178px;font-size:8.2px;font-weight:normal;color:#262626;transform:scaleX(0.8567889794970145);transform-origin:50% 0"><span style="letter-spacing:0.350px;margin-right:-0.350px">East</span></div>
<div class="c k" style="left:126px;width:41px;text-align:center;top:178px;font-size:8.2px;font-weight:normal;color:#262626;transform:scaleX(0.8585552912058516);transform-origin:50% 0"><span style="letter-spacing:0.349px;margin-right:-0.349px">Howard</span></div>
<div class="c k" style="left:167px;width:35px;text-align:center;top:178px;font-size:8.2px;font-weight:normal;color:#262626;transform:scaleX(0.8483468355335111);transform-origin:50% 0"><span style="letter-spacing:0.354px;margin-right:-0.354px">Binder</span></div>
<div class="c k" style="left:202px;width:36px;text-align:center;top:178px;font-size:8.2px;font-weight:normal;color:#262626;transform:scaleX(0.8787753421838015);transform-origin:50% 0"><span style="letter-spacing:0.341px;margin-right:-0.341px">64</span></div>
<div class="c k" style="left:238px;width:41.60000000000002px;text-align:center;top:178px;font-size:8.2px;font-weight:normal;color:#262626;transform:scaleX(0.8552455855800718);transform-origin:50% 0"><span style="letter-spacing:0.351px;margin-right:-0.351px">1,99</span></div>
<div class="c k" style="left:279.6px;width:34.39999999999998px;text-align:center;top:178px;font-size:8.2px;font-weight:normal;color:#262626;transform:scaleX(0.8531560046241556);transform-origin:50% 0"><span style="letter-spacing:0.352px;margin-right:-0.352px">57,71</span></div>
<div class="abs" style="left:36.30000000000001px;top:186.78000000000003px;width:277.7px;height:10.470000000000027px;background:#e2efda;border-bottom:1px solid #a9d08e"></div>
<div class="c k" style="left:36.30000000000001px;width:47.69999999999999px;text-align:center;top:188px;font-size:8.2px;font-weight:normal;color:#262626;transform:scaleX(0.8458370905680287);transform-origin:50% 0"><span style="letter-spacing:0.355px;margin-right:-0.355px">29.07.2019</span></div>
<div class="c k" style="left:84px;width:42px;text-align:center;top:188px;font-size:8.2px;font-weight:normal;color:#262626;transform:scaleX(0.8567889794970145);transform-origin:50% 0"><span style="letter-spacing:0.350px;margin-right:-0.350px">East</span></div>
<div class="c k" style="left:126px;width:41px;text-align:center;top:188px;font-size:8.2px;font-weight:normal;color:#262626;transform:scaleX(0.8495440348518696);transform-origin:50% 0"><span style="letter-spacing:0.353px;margin-right:-0.353px">Parent</span></div>
<div class="c k" style="left:167px;width:35px;text-align:center;top:188px;font-size:8.2px;font-weight:normal;color:#262626;transform:scaleX(0.8483468355335111);transform-origin:50% 0"><span style="letter-spacing:0.354px;margin-right:-0.354px">Binder</span></div>
<div class="c k" style="left:202px;width:36px;text-align:center;top:188px;font-size:8.2px;font-weight:normal;color:#262626;transform:scaleX(0.8787753421838015);transform-origin:50% 0"><span style="letter-spacing:0.341px;margin-right:-0.341px">64</span></div>
<div class="c k" style="left:238px;width:41.60000000000002px;text-align:center;top:188px;font-size:8.2px;font-weight:normal;color:#262626;transform:scaleX(0.8531560046241556);transform-origin:50% 0"><span style="letter-spacing:0.352px;margin-right:-0.352px">19,99</span></div>
<div class="c k" style="left:279.6px;width:34.39999999999998px;text-align:center;top:188px;font-size:8.2px;font-weight:normal;color:#262626;transform:scaleX(0.8509058139248985);transform-origin:50% 0"><span style="letter-spacing:0.353px;margin-right:-0.353px">1619,19</span></div>
<div class="abs" style="left:36.30000000000001px;top:197.25000000000006px;width:277.7px;height:10.470000000000027px;background:#fff;border-bottom:1px solid #a9d08e"></div>
<div class="c k" style="left:36.30000000000001px;width:47.69999999999999px;text-align:center;top:199px;font-size:8.2px;font-weight:normal;color:#262626;transform:scaleX(0.8458370905680287);transform-origin:50% 0"><span style="letter-spacing:0.355px;margin-right:-0.355px">15.08.2019</span></div>
<div class="c k" style="left:84px;width:42px;text-align:center;top:199px;font-size:8.2px;font-weight:normal;color:#262626;transform:scaleX(0.8567889794970145);transform-origin:50% 0"><span style="letter-spacing:0.350px;margin-right:-0.350px">East</span></div>
<div class="c k" style="left:126px;width:41px;text-align:center;top:199px;font-size:8.2px;font-weight:normal;color:#262626;transform:scaleX(0.8567987955280109);transform-origin:50% 0"><span style="letter-spacing:0.350px;margin-right:-0.350px">Jones</span></div>
<div class="c k" style="left:167px;width:35px;text-align:center;top:199px;font-size:8.2px;font-weight:normal;color:#262626;transform:scaleX(0.8444620610158442);transform-origin:50% 0"><span style="letter-spacing:0.355px;margin-right:-0.355px">Pencil</span></div>
<div class="c k" style="left:202px;width:36px;text-align:center;top:199px;font-size:8.2px;font-weight:normal;color:#262626;transform:scaleX(0.8787753421838015);transform-origin:50% 0"><span style="letter-spacing:0.341px;margin-right:-0.341px">60</span></div>
<div class="c k" style="left:238px;width:41.60000000000002px;text-align:center;top:199px;font-size:8.2px;font-weight:normal;color:#262626;transform:scaleX(0.8552455855800718);transform-origin:50% 0"><span style="letter-spacing:0.351px;margin-right:-0.351px">4,99</span></div>
<div class="c k" style="left:279.6px;width:34.39999999999998px;text-align:center;top:199px;font-size:8.2px;font-weight:normal;color:#262626;transform:scaleX(0.8518263305339175);transform-origin:50% 0"><span style="letter-spacing:0.352px;margin-right:-0.352px">174,65</span></div>
<div class="abs" style="left:36.30000000000001px;top:207.72000000000008px;width:277.7px;height:10.470000000000027px;background:#e2efda;border-bottom:1px solid #a9d08e"></div>
<div class="c k" style="left:36.30000000000001px;width:47.69999999999999px;text-align:center;top:209px;font-size:8.2px;font-weight:normal;color:#262626;transform:scaleX(0.8458370905680287);transform-origin:50% 0"><span style="letter-spacing:0.355px;margin-right:-0.355px">01.09.2019</span></div>
<div class="c k" style="left:84px;width:42px;text-align:center;top:209px;font-size:8.2px;font-weight:normal;color:#262626;transform:scaleX(0.8435291305419137);transform-origin:50% 0"><span style="letter-spacing:0.356px;margin-right:-0.356px">Central</span></div>
<div class="c k" style="left:126px;width:41px;text-align:center;top:209px;font-size:8.2px;font-weight:normal;color:#262626;transform:scaleX(0.8543866122076282);transform-origin:50% 0"><span style="letter-spacing:0.351px;margin-right:-0.351px">Smith</span></div>
<div class="c k" style="left:167px;width:35px;text-align:center;top:209px;font-size:8.2px;font-weight:normal;color:#262626;transform:scaleX(0.863474190293737);transform-origin:50% 0"><span style="letter-spacing:0.347px;margin-right:-0.347px">Desk</span></div>
<div class="c k" style="left:202px;width:36px;text-align:center;top:209px;font-size:8.2px;font-weight:normal;color:#262626;transform:scaleX(0.8787753421838015);transform-origin:50% 0"><span style="letter-spacing:0.341px;margin-right:-0.341px">60</span></div>
<div class="c k" style="left:238px;width:41.60000000000002px;text-align:center;top:209px;font-size:8.2px;font-weight:normal;color:#262626;transform:scaleX(0.8677980172206786);transform-origin:50% 0"><span style="letter-spacing:0.346px;margin-right:-0.346px">125</span></div>
<div class="c k" style="left:279.6px;width:34.39999999999998px;text-align:center;top:209px;font-size:8.2px;font-weight:normal;color:#262626;transform:scaleX(0.8677980172206786);transform-origin:50% 0"><span style="letter-spacing:0.346px;margin-right:-0.346px">250</span></div>
<div class="abs" style="left:36.30000000000001px;top:218.1900000000001px;width:277.7px;height:10.470000000000027px;background:#fff;border-bottom:1px solid #a9d08e"></div>
<div class="c k" style="left:36.30000000000001px;width:47.69999999999999px;text-align:center;top:220px;font-size:8.2px;font-weight:normal;color:#262626;transform:scaleX(0.8458370905680287);transform-origin:50% 0"><span style="letter-spacing:0.355px;margin-right:-0.355px">18.09.2019</span></div>
<div class="c k" style="left:84px;width:42px;text-align:center;top:220px;font-size:8.2px;font-weight:normal;color:#262626;transform:scaleX(0.8567889794970145);transform-origin:50% 0"><span style="letter-spacing:0.350px;margin-right:-0.350px">East</span></div>
<div class="c k" style="left:126px;width:41px;text-align:center;top:220px;font-size:8.2px;font-weight:normal;color:#262626;transform:scaleX(0.8567987955280109);transform-origin:50% 0"><span style="letter-spacing:0.350px;margin-right:-0.350px">Jones</span></div>
<div class="c k" style="left:167px;width:35px;text-align:center;top:220px;font-size:8.2px;font-weight:normal;color:#262626;transform:scaleX(0.8499382112774914);transform-origin:50% 0"><span style="letter-spacing:0.353px;margin-right:-0.353px">Pen Set</span></div>
<div class="c k" style="left:202px;width:36px;text-align:center;top:220px;font-size:8.2px;font-weight:normal;color:#262626;transform:scaleX(0.8787753421838015);transform-origin:50% 0"><span style="letter-spacing:0.341px;margin-right:-0.341px">60</span></div>
<div class="c k" style="left:238px;width:41.60000000000002px;text-align:center;top:220px;font-size:8.2px;font-weight:normal;color:#262626;transform:scaleX(0.8531560046241556);transform-origin:50% 0"><span style="letter-spacing:0.352px;margin-right:-0.352px">15,99</span></div>
<div class="c k" style="left:279.6px;width:34.39999999999998px;text-align:center;top:220px;font-size:8.2px;font-weight:normal;color:#262626;transform:scaleX(0.8518263305339175);transform-origin:50% 0"><span style="letter-spacing:0.352px;margin-right:-0.352px">255,84</span></div>
<div class="abs" style="left:36.30000000000001px;top:228.66000000000014px;width:277.7px;height:10.470000000000027px;background:#e2efda;border-bottom:1px solid #a9d08e"></div>
<div class="c k" style="left:36.30000000000001px;width:47.69999999999999px;text-align:center;top:230px;font-size:8.2px;font-weight:normal;color:#262626;transform:scaleX(0.8458370905680287);transform-origin:50% 0"><span style="letter-spacing:0.355px;margin-right:-0.355px">05.10.2019</span></div>
<div class="c k" style="left:84px;width:42px;text-align:center;top:230px;font-size:8.2px;font-weight:normal;color:#262626;transform:scaleX(0.8435291305419137);transform-origin:50% 0"><span style="letter-spacing:0.356px;margin-right:-0.356px">Central</span></div>
<div class="c k" style="left:126px;width:41px;text-align:center;top:230px;font-size:8.2px;font-weight:normal;color:#262626;transform:scaleX(0.857690369255793);transform-origin:50% 0"><span style="letter-spacing:0.350px;margin-right:-0.350px">Morgan</span></div>
<div class="c k" style="left:167px;width:35px;text-align:center;top:230px;font-size:8.2px;font-weight:normal;color:#262626;transform:scaleX(0.8483468355335111);transform-origin:50% 0"><span style="letter-spacing:0.354px;margin-right:-0.354px">Binder</span></div>
<div class="c k" style="left:202px;width:36px;text-align:center;top:230px;font-size:8.2px;font-weight:normal;color:#262626;transform:scaleX(0.8787753421838015);transform-origin:50% 0"><span style="letter-spacing:0.341px;margin-right:-0.341px">56</span></div>
<div class="c k" style="left:238px;width:41.60000000000002px;text-align:center;top:230px;font-size:8.2px;font-weight:normal;color:#262626;transform:scaleX(0.8552455855800718);transform-origin:50% 0"><span style="letter-spacing:0.351px;margin-right:-0.351px">8,99</span></div>
<div class="c k" style="left:279.6px;width:34.39999999999998px;text-align:center;top:230px;font-size:8.2px;font-weight:normal;color:#262626;transform:scaleX(0.8518263305339175);transform-origin:50% 0"><span style="letter-spacing:0.352px;margin-right:-0.352px">251,72</span></div>
<div class="abs" style="left:36.30000000000001px;top:239.13000000000017px;width:277.7px;height:10.470000000000027px;background:#fff;border-bottom:1px solid #a9d08e"></div>
<div class="c k" style="left:36.30000000000001px;width:47.69999999999999px;text-align:center;top:241px;font-size:8.2px;font-weight:normal;color:#262626;transform:scaleX(0.8458370905680287);transform-origin:50% 0"><span style="letter-spacing:0.355px;margin-right:-0.355px">22.10.2019</span></div>
<div class="c k" style="left:84px;width:42px;text-align:center;top:241px;font-size:8.2px;font-weight:normal;color:#262626;transform:scaleX(0.8567889794970145);transform-origin:50% 0"><span style="letter-spacing:0.350px;margin-right:-0.350px">East</span></div>
<div class="c k" style="left:126px;width:41px;text-align:center;top:241px;font-size:8.2px;font-weight:normal;color:#262626;transform:scaleX(0.8567987955280109);transform-origin:50% 0"><span style="letter-spacing:0.350px;margin-right:-0.350px">Jones</span></div>
<div class="c k" style="left:167px;width:35px;text-align:center;top:241px;font-size:8.2px;font-weight:normal;color:#262626;transform:scaleX(0.8705334324672714);transform-origin:50% 0"><span style="letter-spacing:0.345px;margin-right:-0.345px">Pen</span></div>
<div class="c k" style="left:202px;width:36px;text-align:center;top:241px;font-size:8.2px;font-weight:normal;color:#262626;transform:scaleX(0.8787753421838015);transform-origin:50% 0"><span style="letter-spacing:0.341px;margin-right:-0.341px">50</span></div>
<div class="c k" style="left:238px;width:41.60000000000002px;text-align:center;top:241px;font-size:8.2px;font-weight:normal;color:#262626;transform:scaleX(0.8552455855800718);transform-origin:50% 0"><span style="letter-spacing:0.351px;margin-right:-0.351px">8,99</span></div>
<div class="c k" style="left:279.6px;width:34.39999999999998px;text-align:center;top:241px;font-size:8.2px;font-weight:normal;color:#262626;transform:scaleX(0.8518263305339175);transform-origin:50% 0"><span style="letter-spacing:0.352px;margin-right:-0.352px">575,36</span></div>
<div class="abs" style="left:36.30000000000001px;top:249.6000000000002px;width:277.7px;height:10.470000000000027px;background:#e2efda;border-bottom:1px solid #a9d08e"></div>
<div class="c k" style="left:36.30000000000001px;width:47.69999999999999px;text-align:center;top:251px;font-size:8.2px;font-weight:normal;color:#262626;transform:scaleX(0.8448456371734633);transform-origin:50% 0"><span style="letter-spacing:0.355px;margin-right:-0.355px">08.11.2019</span></div>
<div class="c k" style="left:84px;width:42px;text-align:center;top:251px;font-size:8.2px;font-weight:normal;color:#262626;transform:scaleX(0.8567889794970145);transform-origin:50% 0"><span style="letter-spacing:0.350px;margin-right:-0.350px">East</span></div>
<div class="c k" style="left:126px;width:41px;text-align:center;top:251px;font-size:8.2px;font-weight:normal;color:#262626;transform:scaleX(0.8495440348518696);transform-origin:50% 0"><span style="letter-spacing:0.353px;margin-right:-0.353px">Parent</span></div>
<div class="c k" style="left:167px;width:35px;text-align:center;top:251px;font-size:8.2px;font-weight:normal;color:#262626;transform:scaleX(0.8705334324672714);transform-origin:50% 0"><span style="letter-spacing:0.345px;margin-right:-0.345px">Pen</span></div>
<div class="c k" style="left:202px;width:36px;text-align:center;top:251px;font-size:8.2px;font-weight:normal;color:#262626;transform:scaleX(0.8787753421838015);transform-origin:50% 0"><span style="letter-spacing:0.341px;margin-right:-0.341px">36</span></div>
<div class="c k" style="left:238px;width:41.60000000000002px;text-align:center;top:251px;font-size:8.2px;font-weight:normal;color:#262626;transform:scaleX(0.8531560046241556);transform-origin:50% 0"><span style="letter-spacing:0.352px;margin-right:-0.352px">19,99</span></div>
<div class="c k" style="left:279.6px;width:34.39999999999998px;text-align:center;top:251px;font-size:8.2px;font-weight:normal;color:#262626;transform:scaleX(0.8518263305339175);transform-origin:50% 0"><span style="letter-spacing:0.352px;margin-right:-0.352px">299,85</span></div>
<div class="abs" style="left:36.30000000000001px;top:260.0700000000002px;width:277.7px;height:10.470000000000027px;background:#fff;border-bottom:1px solid #a9d08e"></div>
<div class="c k" style="left:36.30000000000001px;width:47.69999999999999px;text-align:center;top:262px;font-size:8.2px;font-weight:normal;color:#262626;transform:scaleX(0.8448456371734633);transform-origin:50% 0"><span style="letter-spacing:0.355px;margin-right:-0.355px">25.11.2019</span></div>
<div class="c k" style="left:84px;width:42px;text-align:center;top:262px;font-size:8.2px;font-weight:normal;color:#262626;transform:scaleX(0.8435291305419137);transform-origin:50% 0"><span style="letter-spacing:0.356px;margin-right:-0.356px">Central</span></div>
<div class="c k" style="left:126px;width:41px;text-align:center;top:262px;font-size:8.2px;font-weight:normal;color:#262626;transform:scaleX(0.8350636701129697);transform-origin:50% 0"><span style="letter-spacing:0.359px;margin-right:-0.359px">Kivell</span></div>
<div class="c k" style="left:167px;width:35px;text-align:center;top:262px;font-size:8.2px;font-weight:normal;color:#262626;transform:scaleX(0.8499382112774914);transform-origin:50% 0"><span style="letter-spacing:0.353px;margin-right:-0.353px">Pen Set</span></div>
<div class="c k" style="left:202px;width:36px;text-align:center;top:262px;font-size:8.2px;font-weight:normal;color:#262626;transform:scaleX(0.8787753421838015);transform-origin:50% 0"><span style="letter-spacing:0.341px;margin-right:-0.341px">35</span></div>
<div class="c k" style="left:238px;width:41.60000000000002px;text-align:center;top:262px;font-size:8.2px;font-weight:normal;color:#262626;transform:scaleX(0.8552455855800718);transform-origin:50% 0"><span style="letter-spacing:0.351px;margin-right:-0.351px">4,99</span></div>
<div class="c k" style="left:279.6px;width:34.39999999999998px;text-align:center;top:262px;font-size:8.2px;font-weight:normal;color:#262626;transform:scaleX(0.8518263305339175);transform-origin:50% 0"><span style="letter-spacing:0.352px;margin-right:-0.352px">479,04</span></div>
<div class="abs" style="left:36.30000000000001px;top:270.54000000000025px;width:277.7px;height:10.470000000000027px;background:#e2efda;border-bottom:1px solid #a9d08e"></div>
<div class="c k" style="left:36.30000000000001px;width:47.69999999999999px;text-align:center;top:272px;font-size:8.2px;font-weight:normal;color:#262626;transform:scaleX(0.8458370905680287);transform-origin:50% 0"><span style="letter-spacing:0.355px;margin-right:-0.355px">12.12.2019</span></div>
<div class="c k" style="left:84px;width:42px;text-align:center;top:272px;font-size:8.2px;font-weight:normal;color:#262626;transform:scaleX(0.8435291305419137);transform-origin:50% 0"><span style="letter-spacing:0.356px;margin-right:-0.356px">Central</span></div>
<div class="c k" style="left:126px;width:41px;text-align:center;top:272px;font-size:8.2px;font-weight:normal;color:#262626;transform:scaleX(0.8543866122076282);transform-origin:50% 0"><span style="letter-spacing:0.351px;margin-right:-0.351px">Smith</span></div>
<div class="c k" style="left:167px;width:35px;text-align:center;top:272px;font-size:8.2px;font-weight:normal;color:#262626;transform:scaleX(0.8444620610158442);transform-origin:50% 0"><span style="letter-spacing:0.355px;margin-right:-0.355px">Pencil</span></div>
<div class="c k" style="left:202px;width:36px;text-align:center;top:272px;font-size:8.2px;font-weight:normal;color:#262626;transform:scaleX(0.8787753421838015);transform-origin:50% 0"><span style="letter-spacing:0.341px;margin-right:-0.341px">29</span></div>
<div class="c k" style="left:238px;width:41.60000000000002px;text-align:center;top:272px;font-size:8.2px;font-weight:normal;color:#262626;transform:scaleX(0.8552455855800718);transform-origin:50% 0"><span style="letter-spacing:0.351px;margin-right:-0.351px">1,29</span></div>
<div class="c k" style="left:279.6px;width:34.39999999999998px;text-align:center;top:272px;font-size:8.2px;font-weight:normal;color:#262626;transform:scaleX(0.8531560046241556);transform-origin:50% 0"><span style="letter-spacing:0.352px;margin-right:-0.352px">86,43</span></div>
<div class="abs" style="left:36.30000000000001px;top:281.0100000000003px;width:277.7px;height:10.470000000000027px;background:#fff;border-bottom:1px solid #a9d08e"></div>
<div class="c k" style="left:36.30000000000001px;width:47.69999999999999px;text-align:center;top:282px;font-size:8.2px;font-weight:normal;color:#262626;transform:scaleX(0.8458370905680287);transform-origin:50% 0"><span style="letter-spacing:0.355px;margin-right:-0.355px">29.12.2019</span></div>
<div class="c k" style="left:84px;width:42px;text-align:center;top:282px;font-size:8.2px;font-weight:normal;color:#262626;transform:scaleX(0.8567889794970145);transform-origin:50% 0"><span style="letter-spacing:0.350px;margin-right:-0.350px">East</span></div>
<div class="c k" style="left:126px;width:41px;text-align:center;top:282px;font-size:8.2px;font-weight:normal;color:#262626;transform:scaleX(0.8495440348518696);transform-origin:50% 0"><span style="letter-spacing:0.353px;margin-right:-0.353px">Parent</span></div>
<div class="c k" style="left:167px;width:35px;text-align:center;top:282px;font-size:8.2px;font-weight:normal;color:#262626;transform:scaleX(0.8499382112774914);transform-origin:50% 0"><span style="letter-spacing:0.353px;margin-right:-0.353px">Pen Set</span></div>
<div class="c k" style="left:202px;width:36px;text-align:center;top:282px;font-size:8.2px;font-weight:normal;color:#262626;transform:scaleX(0.8787753421838015);transform-origin:50% 0"><span style="letter-spacing:0.341px;margin-right:-0.341px">28</span></div>
<div class="c k" style="left:238px;width:41.60000000000002px;text-align:center;top:282px;font-size:8.2px;font-weight:normal;color:#262626;transform:scaleX(0.8531560046241556);transform-origin:50% 0"><span style="letter-spacing:0.352px;margin-right:-0.352px">15,99</span></div>
<div class="c k" style="left:279.6px;width:34.39999999999998px;text-align:center;top:282px;font-size:8.2px;font-weight:normal;color:#262626;transform:scaleX(0.8496313278718064);transform-origin:50% 0"><span style="letter-spacing:0.353px;margin-right:-0.353px">1183,26</span></div>
<div class="abs" style="left:36.30000000000001px;top:291.4800000000003px;width:277.7px;height:10.470000000000027px;background:#e2efda;border-bottom:1px solid #a9d08e"></div>
<div class="c k" style="left:36.30000000000001px;width:47.69999999999999px;text-align:center;top:293px;font-size:8.2px;font-weight:normal;color:#262626;transform:scaleX(0.8458370905680287);transform-origin:50% 0"><span style="letter-spacing:0.355px;margin-right:-0.355px">05.10.2019</span></div>
<div class="c k" style="left:84px;width:42px;text-align:center;top:293px;font-size:8.2px;font-weight:normal;color:#262626;transform:scaleX(0.8435291305419137);transform-origin:50% 0"><span style="letter-spacing:0.356px;margin-right:-0.356px">Central</span></div>
<div class="c k" style="left:126px;width:41px;text-align:center;top:293px;font-size:8.2px;font-weight:normal;color:#262626;transform:scaleX(0.857690369255793);transform-origin:50% 0"><span style="letter-spacing:0.350px;margin-right:-0.350px">Morgan</span></div>
<div class="c k" style="left:167px;width:35px;text-align:center;top:293px;font-size:8.2px;font-weight:normal;color:#262626;transform:scaleX(0.8483468355335111);transform-origin:50% 0"><span style="letter-spacing:0.354px;margin-right:-0.354px">Binder</span></div>
<div class="c k" style="left:202px;width:36px;text-align:center;top:293px;font-size:8.2px;font-weight:normal;color:#262626;transform:scaleX(0.8787753421838015);transform-origin:50% 0"><span style="letter-spacing:0.341px;margin-right:-0.341px">28</span></div>
<div class="c k" style="left:238px;width:41.60000000000002px;text-align:center;top:293px;font-size:8.2px;font-weight:normal;color:#262626;transform:scaleX(0.8552455855800718);transform-origin:50% 0"><span style="letter-spacing:0.351px;margin-right:-0.351px">8,99</span></div>
<div class="c k" style="left:279.6px;width:34.39999999999998px;text-align:center;top:293px;font-size:8.2px;font-weight:normal;color:#262626;transform:scaleX(0.8518263305339175);transform-origin:50% 0"><span style="letter-spacing:0.352px;margin-right:-0.352px">251,72</span></div>
<div class="abs" style="left:36.30000000000001px;top:301.95000000000033px;width:277.7px;height:10.470000000000027px;background:#fff;border-bottom:1px solid #a9d08e"></div>
<div class="c k" style="left:36.30000000000001px;width:47.69999999999999px;text-align:center;top:303px;font-size:8.2px;font-weight:normal;color:#262626;transform:scaleX(0.8458370905680287);transform-origin:50% 0"><span style="letter-spacing:0.355px;margin-right:-0.355px">22.10.2019</span></div>
<div class="c k" style="left:84px;width:42px;text-align:center;top:303px;font-size:8.2px;font-weight:normal;color:#262626;transform:scaleX(0.8567889794970145);transform-origin:50% 0"><span style="letter-spacing:0.350px;margin-right:-0.350px">East</span></div>
<div class="c k" style="left:126px;width:41px;text-align:center;top:303px;font-size:8.2px;font-weight:normal;color:#262626;transform:scaleX(0.8567987955280109);transform-origin:50% 0"><span style="letter-spacing:0.350px;margin-right:-0.350px">Jones</span></div>
<div class="c k" style="left:167px;width:35px;text-align:center;top:303px;font-size:8.2px;font-weight:normal;color:#262626;transform:scaleX(0.8705334324672714);transform-origin:50% 0"><span style="letter-spacing:0.345px;margin-right:-0.345px">Pen</span></div>
<div class="c k" style="left:202px;width:36px;text-align:center;top:303px;font-size:8.2px;font-weight:normal;color:#262626;transform:scaleX(0.8787753421838015);transform-origin:50% 0"><span style="letter-spacing:0.341px;margin-right:-0.341px">25</span></div>
<div class="c k" style="left:238px;width:41.60000000000002px;text-align:center;top:303px;font-size:8.2px;font-weight:normal;color:#262626;transform:scaleX(0.8552455855800718);transform-origin:50% 0"><span style="letter-spacing:0.351px;margin-right:-0.351px">8,99</span></div>
<div class="c k" style="left:279.6px;width:34.39999999999998px;text-align:center;top:303px;font-size:8.2px;font-weight:normal;color:#262626;transform:scaleX(0.8518263305339175);transform-origin:50% 0"><span style="letter-spacing:0.352px;margin-right:-0.352px">575,36</span></div>
<div class="abs" style="left:36.30000000000001px;top:312.42000000000036px;width:277.7px;height:10.470000000000027px;background:#e2efda;border-bottom:1px solid #a9d08e"></div>
<div class="c k" style="left:36.30000000000001px;width:47.69999999999999px;text-align:center;top:314px;font-size:8.2px;font-weight:normal;color:#262626;transform:scaleX(0.8448456371734633);transform-origin:50% 0"><span style="letter-spacing:0.355px;margin-right:-0.355px">08.11.2019</span></div>
<div class="c k" style="left:84px;width:42px;text-align:center;top:314px;font-size:8.2px;font-weight:normal;color:#262626;transform:scaleX(0.8567889794970145);transform-origin:50% 0"><span style="letter-spacing:0.350px;margin-right:-0.350px">East</span></div>
<div class="c k" style="left:126px;width:41px;text-align:center;top:314px;font-size:8.2px;font-weight:normal;color:#262626;transform:scaleX(0.8495440348518696);transform-origin:50% 0"><span style="letter-spacing:0.353px;margin-right:-0.353px">Parent</span></div>
<div class="c k" style="left:167px;width:35px;text-align:center;top:314px;font-size:8.2px;font-weight:normal;color:#262626;transform:scaleX(0.8705334324672714);transform-origin:50% 0"><span style="letter-spacing:0.345px;margin-right:-0.345px">Pen</span></div>
<div class="c k" style="left:202px;width:36px;text-align:center;top:314px;font-size:8.2px;font-weight:normal;color:#262626;transform:scaleX(0.8787753421838015);transform-origin:50% 0"><span style="letter-spacing:0.341px;margin-right:-0.341px">16</span></div>
<div class="c k" style="left:238px;width:41.60000000000002px;text-align:center;top:314px;font-size:8.2px;font-weight:normal;color:#262626;transform:scaleX(0.8531560046241556);transform-origin:50% 0"><span style="letter-spacing:0.352px;margin-right:-0.352px">19,99</span></div>
<div class="c k" style="left:279.6px;width:34.39999999999998px;text-align:center;top:314px;font-size:8.2px;font-weight:normal;color:#262626;transform:scaleX(0.8518263305339175);transform-origin:50% 0"><span style="letter-spacing:0.352px;margin-right:-0.352px">299,85</span></div>
<div class="abs" style="left:36.30000000000001px;top:322.8900000000004px;width:277.7px;height:10.470000000000027px;background:#fff;border-bottom:1px solid #a9d08e"></div>
<div class="c k" style="left:36.30000000000001px;width:47.69999999999999px;text-align:center;top:324px;font-size:8.2px;font-weight:normal;color:#262626;transform:scaleX(0.8448456371734633);transform-origin:50% 0"><span style="letter-spacing:0.355px;margin-right:-0.355px">25.11.2019</span></div>
<div class="c k" style="left:84px;width:42px;text-align:center;top:324px;font-size:8.2px;font-weight:normal;color:#262626;transform:scaleX(0.8435291305419137);transform-origin:50% 0"><span style="letter-spacing:0.356px;margin-right:-0.356px">Central</span></div>
<div class="c k" style="left:126px;width:41px;text-align:center;top:324px;font-size:8.2px;font-weight:normal;color:#262626;transform:scaleX(0.8350636701129697);transform-origin:50% 0"><span style="letter-spacing:0.359px;margin-right:-0.359px">Kivell</span></div>
<div class="c k" style="left:167px;width:35px;text-align:center;top:324px;font-size:8.2px;font-weight:normal;color:#262626;transform:scaleX(0.8499382112774914);transform-origin:50% 0"><span style="letter-spacing:0.353px;margin-right:-0.353px">Pen Set</span></div>
<div class="c k" style="left:202px;width:36px;text-align:center;top:324px;font-size:8.2px;font-weight:normal;color:#262626;transform:scaleX(0.8787753421838015);transform-origin:50% 0"><span style="letter-spacing:0.341px;margin-right:-0.341px">15</span></div>
<div class="c k" style="left:238px;width:41.60000000000002px;text-align:center;top:324px;font-size:8.2px;font-weight:normal;color:#262626;transform:scaleX(0.8552455855800718);transform-origin:50% 0"><span style="letter-spacing:0.351px;margin-right:-0.351px">4,99</span></div>
<div class="c k" style="left:279.6px;width:34.39999999999998px;text-align:center;top:324px;font-size:8.2px;font-weight:normal;color:#262626;transform:scaleX(0.8518263305339175);transform-origin:50% 0"><span style="letter-spacing:0.352px;margin-right:-0.352px">479,04</span></div>
<div class="abs" style="left:36.30000000000001px;top:333.3600000000004px;width:277.7px;height:10.470000000000027px;background:#e2efda;border-bottom:1px solid #a9d08e"></div>
<div class="c k" style="left:36.30000000000001px;width:47.69999999999999px;text-align:center;top:335px;font-size:8.2px;font-weight:normal;color:#262626;transform:scaleX(0.8458370905680287);transform-origin:50% 0"><span style="letter-spacing:0.355px;margin-right:-0.355px">12.12.2019</span></div>
<div class="c k" style="left:84px;width:42px;text-align:center;top:335px;font-size:8.2px;font-weight:normal;color:#262626;transform:scaleX(0.8435291305419137);transform-origin:50% 0"><span style="letter-spacing:0.356px;margin-right:-0.356px">Central</span></div>
<div class="c k" style="left:126px;width:41px;text-align:center;top:335px;font-size:8.2px;font-weight:normal;color:#262626;transform:scaleX(0.8543866122076282);transform-origin:50% 0"><span style="letter-spacing:0.351px;margin-right:-0.351px">Smith</span></div>
<div class="c k" style="left:167px;width:35px;text-align:center;top:335px;font-size:8.2px;font-weight:normal;color:#262626;transform:scaleX(0.8444620610158442);transform-origin:50% 0"><span style="letter-spacing:0.355px;margin-right:-0.355px">Pencil</span></div>
<div class="c k" style="left:202px;width:36px;text-align:center;top:335px;font-size:8.2px;font-weight:normal;color:#262626;transform:scaleX(0.8787753421838015);transform-origin:50% 0"><span style="letter-spacing:0.341px;margin-right:-0.341px">15</span></div>
<div class="c k" style="left:238px;width:41.60000000000002px;text-align:center;top:335px;font-size:8.2px;font-weight:normal;color:#262626;transform:scaleX(0.8552455855800718);transform-origin:50% 0"><span style="letter-spacing:0.351px;margin-right:-0.351px">1,29</span></div>
<div class="c k" style="left:279.6px;width:34.39999999999998px;text-align:center;top:335px;font-size:8.2px;font-weight:normal;color:#262626;transform:scaleX(0.8531560046241556);transform-origin:50% 0"><span style="letter-spacing:0.352px;margin-right:-0.352px">86,43</span></div>
<div class="abs" style="left:36.30000000000001px;top:343.83000000000044px;width:277.7px;height:10.470000000000027px;background:#fff;border-bottom:1px solid #a9d08e"></div>
<div class="c k" style="left:36.30000000000001px;width:47.69999999999999px;text-align:center;top:345px;font-size:8.2px;font-weight:normal;color:#262626;transform:scaleX(0.8458370905680287);transform-origin:50% 0"><span style="letter-spacing:0.355px;margin-right:-0.355px">29.12.2019</span></div>
<div class="c k" style="left:84px;width:42px;text-align:center;top:345px;font-size:8.2px;font-weight:normal;color:#262626;transform:scaleX(0.8567889794970145);transform-origin:50% 0"><span style="letter-spacing:0.350px;margin-right:-0.350px">East</span></div>
<div class="c k" style="left:126px;width:41px;text-align:center;top:345px;font-size:8.2px;font-weight:normal;color:#262626;transform:scaleX(0.8495440348518696);transform-origin:50% 0"><span style="letter-spacing:0.353px;margin-right:-0.353px">Parent</span></div>
<div class="c k" style="left:167px;width:35px;text-align:center;top:345px;font-size:8.2px;font-weight:normal;color:#262626;transform:scaleX(0.8499382112774914);transform-origin:50% 0"><span style="letter-spacing:0.353px;margin-right:-0.353px">Pen Set</span></div>
<div class="c k" style="left:202px;width:36px;text-align:center;top:345px;font-size:8.2px;font-weight:normal;color:#262626;transform:scaleX(0.9117073170731707);transform-origin:50% 0"><span style="letter-spacing:0.329px;margin-right:-0.329px">2</span></div>
<div class="c k" style="left:238px;width:41.60000000000002px;text-align:center;top:345px;font-size:8.2px;font-weight:normal;color:#262626;transform:scaleX(0.8531560046241556);transform-origin:50% 0"><span style="letter-spacing:0.352px;margin-right:-0.352px">15,99</span></div>
<div class="c k" style="left:279.6px;width:34.39999999999998px;text-align:center;top:345px;font-size:8.2px;font-weight:normal;color:#262626;transform:scaleX(0.8496313278718064);transform-origin:50% 0"><span style="letter-spacing:0.353px;margin-right:-0.353px">1183,26</span></div>
<div class="abs" style="left:36.30000000000001px;top:40.2px;width:277.7px;height:314.1000000000005px;border:1px solid #a9d08e;border-top:0"></div>
<div class="abs" style="left:349px;top:40.2px;width:175px;height:10.470000000000013px;background:#ddebf7;border-bottom:1px solid #a3c7e9"></div>
<div class="c k" style="left:350.70000000000005px;top:42px;font-size:8.2px;font-weight:bold;color:#262626;transform:scaleX(0.8103354769155764);transform-origin:0 0"><span style="letter-spacing:0.185px;margin-right:-0.185px">Row Labels</span></div>
<div class="c k" style="left:434px;width:59.39999999999998px;text-align:center;top:42px;font-size:8.2px;font-weight:bold;color:#262626;transform:scaleX(0.8073291587258371);transform-origin:50% 0"><span style="letter-spacing:0.186px;margin-right:-0.186px">Sum of Units</span></div>
<div class="abs" style="left:349px;top:60.140000000000015px;width:175px;height:1px;background:#a3c7e9"></div>
<div class="c k" style="left:358.5px;top:52px;font-size:8.2px;font-weight:bold;color:#1e1e1e;transform:scaleX(0.8890161062596242);transform-origin:0 0"><span style="letter-spacing:0.169px;margin-right:-0.169px">01.04.2019</span></div>
<div class="c k" style="left:421.9px;width:100px;text-align:right;top:52px;font-size:8.2px;font-weight:bold;color:#1e1e1e;transform:scaleX(0.9054852320675106);transform-origin:100% 0"><span style="letter-spacing:0.166px;margin-right:-0.166px">81</span></div>
<div class="c k" style="left:363.9px;top:63px;font-size:8.2px;font-weight:bold;color:#1e1e1e;transform:scaleX(0.8754513840700107);transform-origin:0 0"><span style="letter-spacing:0.171px;margin-right:-0.171px">East</span></div>
<div class="c k" style="left:421.9px;width:100px;text-align:right;top:63px;font-size:8.2px;font-weight:bold;color:#1e1e1e;transform:scaleX(0.9054852320675106);transform-origin:100% 0"><span style="letter-spacing:0.166px;margin-right:-0.166px">81</span></div>
<div class="c k" style="left:368.70000000000005px;top:73px;font-size:7.6px;font-weight:normal;color:#383838;transform:scaleX(0.8408288582589201);transform-origin:0 0"><span style="letter-spacing:0.357px;margin-right:-0.357px">Jones</span></div>
<div class="c k" style="left:421.9px;width:100px;text-align:right;top:73px;font-size:7.6px;font-weight:normal;color:#383838;transform:scaleX(0.8645114783187313);transform-origin:100% 0"><span style="letter-spacing:0.347px;margin-right:-0.347px">81</span></div>
<div class="abs" style="left:349px;top:91.55000000000001px;width:175px;height:1px;background:#a3c7e9"></div>
<div class="c k" style="left:358.5px;top:84px;font-size:8.2px;font-weight:bold;color:#1e1e1e;transform:scaleX(0.8890161062596242);transform-origin:0 0"><span style="letter-spacing:0.169px;margin-right:-0.169px">05.05.2019</span></div>
<div class="c k" style="left:421.9px;width:100px;text-align:right;top:84px;font-size:8.2px;font-weight:bold;color:#1e1e1e;transform:scaleX(0.9054852320675106);transform-origin:100% 0"><span style="letter-spacing:0.166px;margin-right:-0.166px">74</span></div>
<div class="c k" style="left:363.9px;top:94px;font-size:8.2px;font-weight:bold;color:#1e1e1e;transform:scaleX(0.869567784224764);transform-origin:0 0"><span style="letter-spacing:0.172px;margin-right:-0.172px">Central</span></div>
<div class="c k" style="left:421.9px;width:100px;text-align:right;top:94px;font-size:8.2px;font-weight:bold;color:#1e1e1e;transform:scaleX(0.9054852320675106);transform-origin:100% 0"><span style="letter-spacing:0.166px;margin-right:-0.166px">74</span></div>
<div class="c k" style="left:368.70000000000005px;top:104px;font-size:7.6px;font-weight:normal;color:#383838;transform:scaleX(0.82778697156612);transform-origin:0 0"><span style="letter-spacing:0.362px;margin-right:-0.362px">Jardine</span></div>
<div class="c k" style="left:421.9px;width:100px;text-align:right;top:104px;font-size:7.6px;font-weight:normal;color:#383838;transform:scaleX(0.8645114783187313);transform-origin:100% 0"><span style="letter-spacing:0.347px;margin-right:-0.347px">74</span></div>
<div class="abs" style="left:349px;top:122.96000000000001px;width:175px;height:1px;background:#a3c7e9"></div>
<div class="c k" style="left:358.5px;top:115px;font-size:8.2px;font-weight:bold;color:#1e1e1e;transform:scaleX(0.8890161062596242);transform-origin:0 0"><span style="letter-spacing:0.169px;margin-right:-0.169px">06.01.2019</span></div>
<div class="c k" style="left:421.9px;width:100px;text-align:right;top:115px;font-size:8.2px;font-weight:bold;color:#1e1e1e;transform:scaleX(0.9054852320675106);transform-origin:100% 0"><span style="letter-spacing:0.166px;margin-right:-0.166px">96</span></div>
<div class="c k" style="left:363.9px;top:125px;font-size:8.2px;font-weight:bold;color:#1e1e1e;transform:scaleX(0.8754513840700107);transform-origin:0 0"><span style="letter-spacing:0.171px;margin-right:-0.171px">East</span></div>
<div class="c k" style="left:421.9px;width:100px;text-align:right;top:125px;font-size:8.2px;font-weight:bold;color:#1e1e1e;transform:scaleX(0.9054852320675106);transform-origin:100% 0"><span style="letter-spacing:0.166px;margin-right:-0.166px">96</span></div>
<div class="c k" style="left:368.70000000000005px;top:146px;font-size:7.6px;font-weight:normal;color:#383838;transform:scaleX(0.8408288582589201);transform-origin:0 0"><span style="letter-spacing:0.357px;margin-right:-0.357px">Jones</span></div>
<div class="c k" style="left:421.9px;width:100px;text-align:right;top:146px;font-size:7.6px;font-weight:normal;color:#383838;transform:scaleX(0.8645114783187313);transform-origin:100% 0"><span style="letter-spacing:0.347px;margin-right:-0.347px">96</span></div>
<div class="abs" style="left:349px;top:164.84px;width:175px;height:1px;background:#a3c7e9"></div>
<div class="c k" style="left:358.5px;top:157px;font-size:8.2px;font-weight:bold;color:#1e1e1e;transform:scaleX(0.8890161062596242);transform-origin:0 0"><span style="letter-spacing:0.169px;margin-right:-0.169px">09.02.2019</span></div>
<div class="c k" style="left:421.9px;width:100px;text-align:right;top:157px;font-size:8.2px;font-weight:bold;color:#1e1e1e;transform:scaleX(0.9054852320675106);transform-origin:100% 0"><span style="letter-spacing:0.166px;margin-right:-0.166px">96</span></div>
<div class="c k" style="left:363.9px;top:167px;font-size:8.2px;font-weight:bold;color:#1e1e1e;transform:scaleX(0.869567784224764);transform-origin:0 0"><span style="letter-spacing:0.172px;margin-right:-0.172px">Central</span></div>
<div class="c k" style="left:421.9px;width:100px;text-align:right;top:167px;font-size:8.2px;font-weight:bold;color:#1e1e1e;transform:scaleX(0.9054852320675106);transform-origin:100% 0"><span style="letter-spacing:0.166px;margin-right:-0.166px">96</span></div>
<div class="c k" style="left:368.70000000000005px;top:178px;font-size:7.6px;font-weight:normal;color:#383838;transform:scaleX(0.82778697156612);transform-origin:0 0"><span style="letter-spacing:0.362px;margin-right:-0.362px">Jardine</span></div>
<div class="c k" style="left:421.9px;width:100px;text-align:right;top:178px;font-size:7.6px;font-weight:normal;color:#383838;transform:scaleX(0.8645114783187313);transform-origin:100% 0"><span style="letter-spacing:0.347px;margin-right:-0.347px">96</span></div>
<div class="abs" style="left:349px;top:196.25000000000006px;width:175px;height:1px;background:#a3c7e9"></div>
<div class="c k" style="left:358.5px;top:188px;font-size:8.2px;font-weight:bold;color:#1e1e1e;transform:scaleX(0.8890161062596242);transform-origin:0 0"><span style="letter-spacing:0.169px;margin-right:-0.169px">15.03.2019</span></div>
<div class="c k" style="left:421.9px;width:100px;text-align:right;top:188px;font-size:8.2px;font-weight:bold;color:#1e1e1e;transform:scaleX(0.9054852320675106);transform-origin:100% 0"><span style="letter-spacing:0.166px;margin-right:-0.166px">90</span></div>
<div class="c k" style="left:363.9px;top:199px;font-size:8.2px;font-weight:bold;color:#1e1e1e;transform:scaleX(0.8782904947657816);transform-origin:0 0"><span style="letter-spacing:0.171px;margin-right:-0.171px">West</span></div>
<div class="c k" style="left:421.9px;width:100px;text-align:right;top:199px;font-size:8.2px;font-weight:bold;color:#1e1e1e;transform:scaleX(0.9054852320675106);transform-origin:100% 0"><span style="letter-spacing:0.166px;margin-right:-0.166px">90</span></div>
<div class="c k" style="left:368.70000000000005px;top:209px;font-size:7.6px;font-weight:normal;color:#383838;transform:scaleX(0.8301479505214648);transform-origin:0 0"><span style="letter-spacing:0.361px;margin-right:-0.361px">Sorvino</span></div>
<div class="c k" style="left:421.9px;width:100px;text-align:right;top:209px;font-size:7.6px;font-weight:normal;color:#383838;transform:scaleX(0.8645114783187313);transform-origin:100% 0"><span style="letter-spacing:0.347px;margin-right:-0.347px">90</span></div>
<div class="abs" style="left:349px;top:227.66000000000014px;width:175px;height:1px;background:#a3c7e9"></div>
<div class="c k" style="left:358.5px;top:220px;font-size:8.2px;font-weight:bold;color:#1e1e1e;transform:scaleX(0.8890161062596242);transform-origin:0 0"><span style="letter-spacing:0.169px;margin-right:-0.169px">18.04.2019</span></div>
<div class="c k" style="left:421.9px;width:100px;text-align:right;top:220px;font-size:8.2px;font-weight:bold;color:#1e1e1e;transform:scaleX(0.9054852320675106);transform-origin:100% 0"><span style="letter-spacing:0.166px;margin-right:-0.166px">75</span></div>
<div class="c k" style="left:363.9px;top:230px;font-size:8.2px;font-weight:bold;color:#1e1e1e;transform:scaleX(0.869567784224764);transform-origin:0 0"><span style="letter-spacing:0.172px;margin-right:-0.172px">Central</span></div>
<div class="c k" style="left:421.9px;width:100px;text-align:right;top:230px;font-size:8.2px;font-weight:bold;color:#1e1e1e;transform:scaleX(0.9054852320675106);transform-origin:100% 0"><span style="letter-spacing:0.166px;margin-right:-0.166px">75</span></div>
<div class="c k" style="left:368.70000000000005px;top:241px;font-size:7.6px;font-weight:normal;color:#383838;transform:scaleX(0.8391249207355739);transform-origin:0 0"><span style="letter-spacing:0.358px;margin-right:-0.358px">Andrews</span></div>
<div class="c k" style="left:421.9px;width:100px;text-align:right;top:241px;font-size:7.6px;font-weight:normal;color:#383838;transform:scaleX(0.8645114783187313);transform-origin:100% 0"><span style="letter-spacing:0.347px;margin-right:-0.347px">75</span></div>
<div class="abs" style="left:349px;top:259.0700000000002px;width:175px;height:1px;background:#a3c7e9"></div>
<div class="c k" style="left:358.5px;top:251px;font-size:8.2px;font-weight:bold;color:#1e1e1e;transform:scaleX(0.8890161062596242);transform-origin:0 0"><span style="letter-spacing:0.169px;margin-right:-0.169px">22.05.2019</span></div>
<div class="c k" style="left:421.9px;width:100px;text-align:right;top:251px;font-size:8.2px;font-weight:bold;color:#1e1e1e;transform:scaleX(0.9054852320675106);transform-origin:100% 0"><span style="letter-spacing:0.166px;margin-right:-0.166px">74</span></div>
<div class="c k" style="left:363.9px;top:262px;font-size:8.2px;font-weight:bold;color:#1e1e1e;transform:scaleX(0.8782904947657816);transform-origin:0 0"><span style="letter-spacing:0.171px;margin-right:-0.171px">West</span></div>
<div class="c k" style="left:421.9px;width:100px;text-align:right;top:262px;font-size:8.2px;font-weight:bold;color:#1e1e1e;transform:scaleX(0.9054852320675106);transform-origin:100% 0"><span style="letter-spacing:0.166px;margin-right:-0.166px">74</span></div>
<div class="c k" style="left:368.70000000000005px;top:272px;font-size:7.6px;font-weight:normal;color:#383838;transform:scaleX(0.8415153783223964);transform-origin:0 0"><span style="letter-spacing:0.356px;margin-right:-0.356px">Thompson</span></div>
<div class="c k" style="left:421.9px;width:100px;text-align:right;top:272px;font-size:7.6px;font-weight:normal;color:#383838;transform:scaleX(0.8645114783187313);transform-origin:100% 0"><span style="letter-spacing:0.347px;margin-right:-0.347px">74</span></div>
<div class="abs" style="left:349px;top:290.4800000000003px;width:175px;height:1px;background:#a3c7e9"></div>
<div class="c k" style="left:358.5px;top:282px;font-size:8.2px;font-weight:bold;color:#1e1e1e;transform:scaleX(0.8890161062596242);transform-origin:0 0"><span style="letter-spacing:0.169px;margin-right:-0.169px">23.01.2019</span></div>
<div class="c k" style="left:421.9px;width:100px;text-align:right;top:282px;font-size:8.2px;font-weight:bold;color:#1e1e1e;transform:scaleX(0.9054852320675106);transform-origin:100% 0"><span style="letter-spacing:0.166px;margin-right:-0.166px">96</span></div>
<div class="c k" style="left:363.9px;top:293px;font-size:8.2px;font-weight:bold;color:#1e1e1e;transform:scaleX(0.869567784224764);transform-origin:0 0"><span style="letter-spacing:0.172px;margin-right:-0.172px">Central</span></div>
<div class="c k" style="left:421.9px;width:100px;text-align:right;top:293px;font-size:8.2px;font-weight:bold;color:#1e1e1e;transform:scaleX(0.9054852320675106);transform-origin:100% 0"><span style="letter-spacing:0.166px;margin-right:-0.166px">96</span></div>
<div class="c k" style="left:368.70000000000005px;top:303px;font-size:7.6px;font-weight:normal;color:#383838;transform:scaleX(0.8174065661779889);transform-origin:0 0"><span style="letter-spacing:0.367px;margin-right:-0.367px">Kivell</span></div>
<div class="c k" style="left:421.9px;width:100px;text-align:right;top:303px;font-size:7.6px;font-weight:normal;color:#383838;transform:scaleX(0.8645114783187313);transform-origin:100% 0"><span style="letter-spacing:0.347px;margin-right:-0.347px">96</span></div>
<div class="abs" style="left:349px;top:321.8900000000004px;width:175px;height:1px;background:#a3c7e9"></div>
<div class="c k" style="left:358.5px;top:314px;font-size:8.2px;font-weight:bold;color:#1e1e1e;transform:scaleX(0.8890161062596242);transform-origin:0 0"><span style="letter-spacing:0.169px;margin-right:-0.169px">26.02.2019</span></div>
<div class="c k" style="left:421.9px;width:100px;text-align:right;top:314px;font-size:8.2px;font-weight:bold;color:#1e1e1e;transform:scaleX(0.9054852320675106);transform-origin:100% 0"><span style="letter-spacing:0.166px;margin-right:-0.166px">90</span></div>
<div class="c k" style="left:363.9px;top:324px;font-size:8.2px;font-weight:bold;color:#1e1e1e;transform:scaleX(0.869567784224764);transform-origin:0 0"><span style="letter-spacing:0.172px;margin-right:-0.172px">Central</span></div>
<div class="c k" style="left:421.9px;width:100px;text-align:right;top:324px;font-size:8.2px;font-weight:bold;color:#1e1e1e;transform:scaleX(0.9054852320675106);transform-origin:100% 0"><span style="letter-spacing:0.166px;margin-right:-0.166px">90</span></div>
<div class="c k" style="left:368.70000000000005px;top:335px;font-size:7.6px;font-weight:normal;color:#383838;transform:scaleX(0.8180094516882082);transform-origin:0 0"><span style="letter-spacing:0.367px;margin-right:-0.367px">Gill</span></div>
<div class="c k" style="left:421.9px;width:100px;text-align:right;top:335px;font-size:7.6px;font-weight:normal;color:#383838;transform:scaleX(0.8645114783187313);transform-origin:100% 0"><span style="letter-spacing:0.347px;margin-right:-0.347px">90</span></div>
<div class="abs" style="left:349px;top:342.83000000000044px;width:175px;height:11.470000000000027px;background:#ddebf7;border-top:1px solid #a3c7e9"></div>
<div class="c k" style="left:350.70000000000005px;top:345px;font-size:8.2px;font-weight:bold;color:#262626;transform:scaleX(0.8581427534418402);transform-origin:0 0"><span style="letter-spacing:0.175px;margin-right:-0.175px">Grand Total</span></div>
<div class="c k" style="left:421.9px;width:100px;text-align:right;top:345px;font-size:8.2px;font-weight:bold;color:#262626;transform:scaleX(0.8999965695859491);transform-origin:100% 0"><span style="letter-spacing:0.167px;margin-right:-0.167px">772</span></div>
</div>
<div id="frame"></div></div></body></html>
